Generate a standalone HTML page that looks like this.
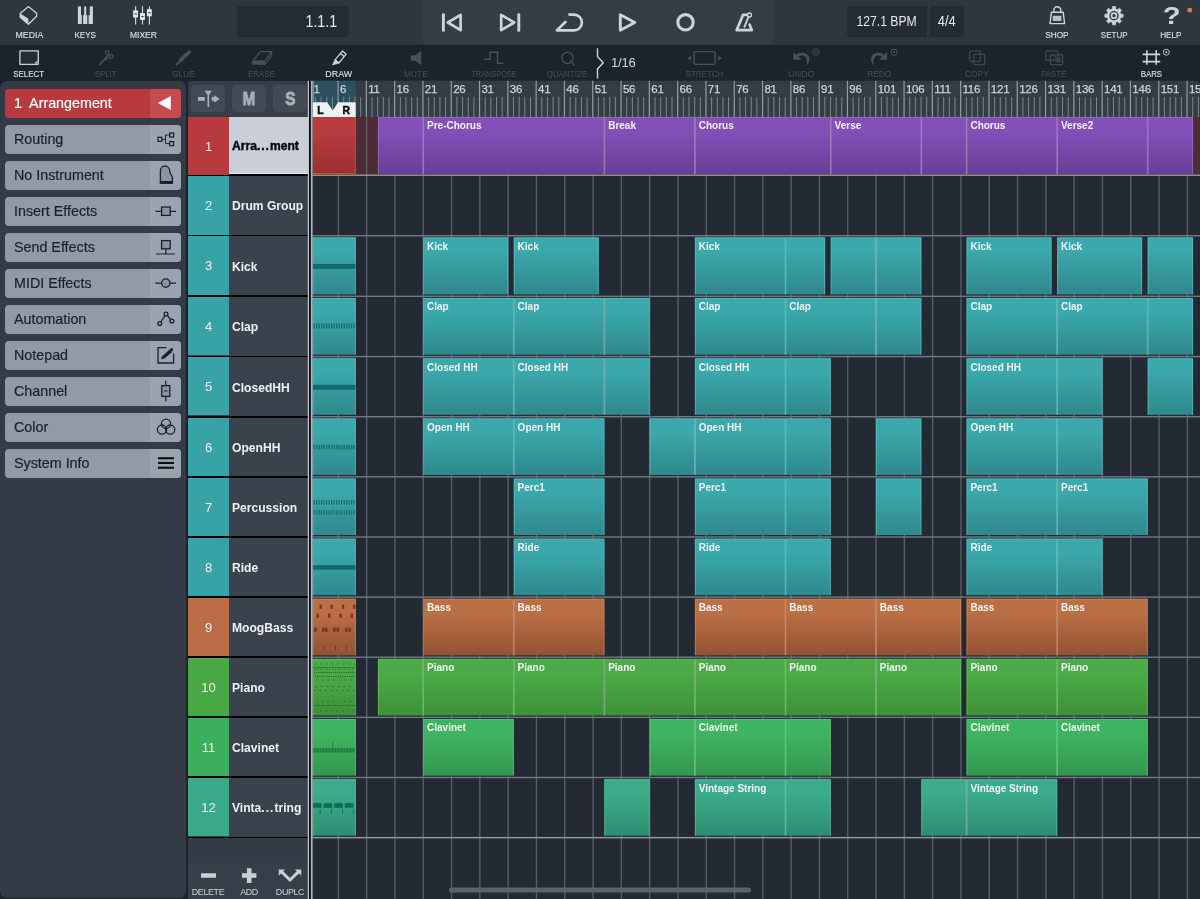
<!DOCTYPE html>
<html lang="en"><head><meta charset="utf-8"><title>Arrangement</title>
<style>

html,body{margin:0;padding:0;background:#1d232c;}
body{width:1200px;height:899px;overflow:hidden;position:relative;font-family:"Liberation Sans", sans-serif;}
.abs{position:absolute}
.tlab,.blab,.pbtn span,.trow b,.trow span,.hb span,.box,.q16{will-change:transform}
#tl text,#icons text{will-change:transform}
#top{left:0;top:0;width:1200px;height:44.5px;background:#2e3640}
#trans{left:422.5px;top:0;width:350.5px;height:44.5px;background:#343c46}
#tool{left:0;top:44.5px;width:1200px;height:36.5px;background:#1d232c}
.box{background:#252b34;border-radius:3px;color:#e4e8ec;text-align:center}
.tlab{position:absolute;font-size:9.1px;color:#dde1e5;text-align:center;width:60px;margin-left:-30px;white-space:nowrap;letter-spacing:0;-webkit-text-stroke:0.1px currentColor}
.tlab.off{color:#454c56}
#panel{left:0;top:80.5px;width:185.6px;height:817.8px;background:#343b46;border-radius:7px}
.pbtn{position:absolute;left:5px;width:176px;height:28.5px;border-radius:4px;background:#909ba5;overflow:hidden;color:#1b212a;font-size:14.3px;line-height:28.5px}
.pbtn span{position:absolute;left:8.6px;top:0;white-space:nowrap;-webkit-text-stroke:0.2px currentColor}
.pbtn i{position:absolute;left:145px;top:0;width:31px;height:28.5px;background:#9aa4ae}
.pbtn.sel{background:#b83a40;color:#fff}
.pbtn.sel i{background:#c64a4e}
#tlist{left:187.8px;top:80.8px;width:120px;height:819px;background:linear-gradient(#000,#000) 0 35px/120px 724px no-repeat}
#thdr{left:0;top:0;width:120px;height:35.8px;background:#363e49;border-radius:4px 0 0 0}
.hb{position:absolute;top:4.6px;width:33.8px;height:26.8px;border-radius:4.5px;background:#424a55;color:#a9b0b8;font-weight:bold;font-size:19px;line-height:27.4px;text-align:center}
.hb span{display:inline-block;transform:scaleX(0.8);-webkit-text-stroke:0.9px #a9b0b8}
.trow{position:absolute;left:0;width:120px;height:58.4px;background:#3a424d}
.trow b{position:absolute;left:0;top:0;padding-top:1.2px;box-sizing:border-box;width:41px;height:100%;font-weight:normal;color:#eef2f4;font-size:13px;text-align:center;line-height:inherit}
.trow span{position:absolute;left:44.2px;top:1.2px;line-height:inherit;font-size:12.1px;font-weight:bold;color:#eef1f4;white-space:nowrap}
.trow u{text-decoration:none;letter-spacing:1px}
.trow.sel{background:#c9ced8;box-shadow:inset 0 -1px 0 #e6e9ee}
.trow.sel span{color:#07080b;-webkit-text-stroke:0.45px #07080b}
#tbot1{left:0;top:757.5px;width:120px;height:24.7px;background:#333b46}
#tbot2{left:0;top:782.2px;width:120px;height:37px;background:#363e49}
.blab{position:absolute;top:806.6px;font-size:8.9px;color:#d0d5da;width:50px;margin-left:-25px;text-align:center;letter-spacing:-0.35px}

</style></head><body>
<div id="top" class="abs"></div><div id="trans" class="abs"></div><div id="tool" class="abs"></div>
<div class="abs box" style="left:237px;top:6px;width:112px;height:31px;"><div class="abs" style="right:11.6px;top:0.4px;line-height:31px;font-size:15.8px;transform:scaleX(0.9);transform-origin:100% 50%">1.1.1</div></div>
<div class="abs box" style="left:847px;top:6px;width:80px;height:31px;line-height:31.6px;font-size:14px;border-radius:3px 0 0 3px"><span style="display:inline-block;transform:scaleX(0.87)">127.1 BPM</span></div>
<div class="abs box" style="left:929.5px;top:6px;width:34px;height:31px;line-height:31.6px;font-size:14px;border-radius:0 3px 3px 0"><span style="display:inline-block;transform:scaleX(0.92)">4/4</span></div>
<div class="tlab" style="left:28.5px;top:29.6px"><span style="display:inline-block;transform:scaleX(0.968)">MEDIA</span></div>
<div class="tlab" style="left:85.3px;top:29.6px"><span style="display:inline-block;transform:scaleX(0.882)">KEYS</span></div>
<div class="tlab" style="left:142.5px;top:29.6px"><span style="display:inline-block;transform:scaleX(0.934)">MIXER</span></div>
<div class="tlab" style="left:1056.8px;top:29.6px"><span style="display:inline-block;transform:scaleX(0.908)">SHOP</span></div>
<div class="tlab" style="left:1113.8px;top:29.6px"><span style="display:inline-block;transform:scaleX(0.877)">SETUP</span></div>
<div class="tlab" style="left:1171px;top:29.6px"><span style="display:inline-block;transform:scaleX(0.900)">HELP</span></div>
<div class="tlab" style="left:28.5px;top:68.9px"><span style="display:inline-block;transform:scaleX(0.876)">SELECT</span></div>
<div class="tlab off" style="left:106px;top:68.9px"><span style="display:inline-block;transform:scaleX(0.862)">SPLIT</span></div>
<div class="tlab off" style="left:183.3px;top:68.9px"><span style="display:inline-block;transform:scaleX(0.916)">GLUE</span></div>
<div class="tlab off" style="left:261.2px;top:68.9px"><span style="display:inline-block;transform:scaleX(0.875)">ERASE</span></div>
<div class="tlab" style="left:339px;top:68.9px"><span style="display:inline-block;transform:scaleX(0.974)">DRAW</span></div>
<div class="tlab off" style="left:416.2px;top:68.9px"><span style="display:inline-block;transform:scaleX(0.920)">MUTE</span></div>
<div class="tlab off" style="left:493.6px;top:68.9px"><span style="display:inline-block;transform:scaleX(0.809)">TRANSPOSE</span></div>
<div class="tlab off" style="left:566.8px;top:68.9px"><span style="display:inline-block;transform:scaleX(0.876)">QUANTIZE</span></div>
<div class="tlab off" style="left:704.3px;top:68.9px"><span style="display:inline-block;transform:scaleX(0.880)">STRETCH</span></div>
<div class="tlab off" style="left:801px;top:68.9px"><span style="display:inline-block;transform:scaleX(0.978)">UNDO</span></div>
<div class="tlab off" style="left:879px;top:68.9px"><span style="display:inline-block;transform:scaleX(0.913)">REDO</span></div>
<div class="tlab off" style="left:976.8px;top:68.9px"><span style="display:inline-block;transform:scaleX(0.919)">COPY</span></div>
<div class="tlab off" style="left:1054px;top:68.9px"><span style="display:inline-block;transform:scaleX(0.868)">PASTE</span></div>
<div class="tlab" style="left:1151.2px;top:68.9px"><span style="display:inline-block;transform:scaleX(0.868)">BARS</span></div>
<div class="abs q16" style="left:611.4px;top:55.2px;font-size:13px;color:#d5dade;letter-spacing:-0.2px">1/16</div>
<div id="panel" class="abs">
<div class="pbtn sel" style="top:8.5px"><i></i><span>1&nbsp; Arrangement</span></div>
<div class="pbtn" style="top:44.5px"><i></i><span>Routing</span></div>
<div class="pbtn" style="top:80.5px"><i></i><span>No Instrument</span></div>
<div class="pbtn" style="top:116.5px"><i></i><span>Insert Effects</span></div>
<div class="pbtn" style="top:152.5px"><i></i><span>Send Effects</span></div>
<div class="pbtn" style="top:188.5px"><i></i><span>MIDI Effects</span></div>
<div class="pbtn" style="top:224.5px"><i></i><span>Automation</span></div>
<div class="pbtn" style="top:260.5px"><i></i><span>Notepad</span></div>
<div class="pbtn" style="top:296.5px"><i></i><span>Channel</span></div>
<div class="pbtn" style="top:332.5px"><i></i><span>Color</span></div>
<div class="pbtn" style="top:368.5px"><i></i><span>System Info</span></div>
</div>
<div id="tlist" class="abs">
<div id="thdr" class="abs"><div class="hb" style="left:3.6px"></div><div class="hb" style="left:44.4px"><span>M</span></div><div class="hb" style="left:85.2px"><span>S</span></div></div>
<div class="trow sel" style="top:35.80px;height:57.60px;line-height:57.60px"><b style="background:#b73a3f">1</b><span>Arra<u>...</u>ment</span></div>
<div class="trow" style="top:95.20px;height:58.70px;line-height:58.70px"><b style="background:#38a3a6">2</b><span>Drum Group</span></div>
<div class="trow" style="top:155.70px;height:58.80px;line-height:58.80px"><b style="background:#38a3a6">3</b><span>Kick</span></div>
<div class="trow" style="top:216.30px;height:58.48px;line-height:58.48px"><b style="background:#38a3a6">4</b><span>Clap</span></div>
<div class="trow" style="top:276.58px;height:58.33px;line-height:58.33px"><b style="background:#38a3a6">5</b><span>ClosedHH</span></div>
<div class="trow" style="top:336.71px;height:58.33px;line-height:58.33px"><b style="background:#38a3a6">6</b><span>OpenHH</span></div>
<div class="trow" style="top:396.84px;height:58.33px;line-height:58.33px"><b style="background:#38a3a6">7</b><span>Percussion</span></div>
<div class="trow" style="top:456.97px;height:58.33px;line-height:58.33px"><b style="background:#38a3a6">8</b><span>Ride</span></div>
<div class="trow" style="top:517.10px;height:58.33px;line-height:58.33px"><b style="background:#b96c45">9</b><span>MoogBass</span></div>
<div class="trow" style="top:577.23px;height:58.33px;line-height:58.33px"><b style="background:#48a844">10</b><span>Piano</span></div>
<div class="trow" style="top:637.36px;height:58.33px;line-height:58.33px"><b style="background:#3caf5c">11</b><span>Clavinet</span></div>
<div class="trow" style="top:697.49px;height:58.33px;line-height:58.33px"><b style="background:#3aa988">12</b><span>Vinta<u>...</u>tring</span></div>
<div id="tbot1" class="abs"></div><div id="tbot2" class="abs"></div>
<div class="blab" style="left:20.6px">DELETE</div>
<div class="blab" style="left:61.4px">ADD</div>
<div class="blab" style="left:102.2px">DUPLC</div>
</div>
<svg id="tl" width="1200" height="899" viewBox="0 0 1200 899" style="position:absolute;left:0;top:0">
<defs>
<linearGradient id="g_teal" x1="0" y1="0" x2="0" y2="1"><stop offset="0" stop-color="#3ba8ab"/><stop offset="0.25" stop-color="#3ba8ab"/><stop offset="1" stop-color="#2f888c"/></linearGradient>
<linearGradient id="g_purple" x1="0" y1="0" x2="0" y2="1"><stop offset="0" stop-color="#8350b8"/><stop offset="0.25" stop-color="#8350b8"/><stop offset="1" stop-color="#693e96"/></linearGradient>
<linearGradient id="g_orange" x1="0" y1="0" x2="0" y2="1"><stop offset="0" stop-color="#bb6f45"/><stop offset="0.25" stop-color="#bb6f45"/><stop offset="1" stop-color="#925233"/></linearGradient>
<linearGradient id="g_green" x1="0" y1="0" x2="0" y2="1"><stop offset="0" stop-color="#4bab47"/><stop offset="0.25" stop-color="#4bab47"/><stop offset="1" stop-color="#3e9138"/></linearGradient>
<linearGradient id="g_clav" x1="0" y1="0" x2="0" y2="1"><stop offset="0" stop-color="#3eb460"/><stop offset="0.25" stop-color="#3eb460"/><stop offset="1" stop-color="#34974f"/></linearGradient>
<linearGradient id="g_vint" x1="0" y1="0" x2="0" y2="1"><stop offset="0" stop-color="#3bac8a"/><stop offset="0.25" stop-color="#3bac8a"/><stop offset="1" stop-color="#2e8d70"/></linearGradient>
<linearGradient id="g_red" x1="0" y1="0" x2="0" y2="1"><stop offset="0" stop-color="#b93b40"/><stop offset="0.25" stop-color="#b93b40"/><stop offset="1" stop-color="#98302f"/></linearGradient>
<clipPath id="cp_tl"><rect x="312.6" y="80" width="900" height="830"/></clipPath>
</defs>
<rect x="308" y="117" width="892" height="782" fill="#232a34"/>
<path d="M312.6 80.8 H1193 Q1200 80.8 1200 88 V117 H312.6 Z" fill="#343c46"/>
<rect x="312.6" y="80.8" width="43" height="36.2" fill="#2b5160"/>
<g clip-path="url(#cp_tl)">
<rect x="314.91" y="96.8" width="1" height="20.2" fill="#7e858d"/>
<rect x="320.57" y="96.8" width="1" height="20.2" fill="#7e858d"/>
<rect x="326.23" y="96.8" width="1" height="20.2" fill="#7e858d"/>
<rect x="331.89" y="96.8" width="1" height="20.2" fill="#7e858d"/>
<rect x="337.45" y="80.8" width="1.2" height="36.2" fill="#959ba2"/>
<rect x="343.21" y="96.8" width="1" height="20.2" fill="#7e858d"/>
<rect x="348.87" y="96.8" width="1" height="20.2" fill="#7e858d"/>
<rect x="354.53" y="96.8" width="1" height="20.2" fill="#7e858d"/>
<rect x="360.19" y="96.8" width="1" height="20.2" fill="#7e858d"/>
<rect x="365.75" y="80.8" width="1.2" height="36.2" fill="#959ba2"/>
<rect x="371.51" y="96.8" width="1" height="20.2" fill="#7e858d"/>
<rect x="377.17" y="96.8" width="1" height="20.2" fill="#7e858d"/>
<rect x="382.83" y="96.8" width="1" height="20.2" fill="#7e858d"/>
<rect x="388.49" y="96.8" width="1" height="20.2" fill="#7e858d"/>
<rect x="394.05" y="80.8" width="1.2" height="36.2" fill="#959ba2"/>
<rect x="399.81" y="96.8" width="1" height="20.2" fill="#7e858d"/>
<rect x="405.47" y="96.8" width="1" height="20.2" fill="#7e858d"/>
<rect x="411.13" y="96.8" width="1" height="20.2" fill="#7e858d"/>
<rect x="416.79" y="96.8" width="1" height="20.2" fill="#7e858d"/>
<rect x="422.35" y="80.8" width="1.2" height="36.2" fill="#959ba2"/>
<rect x="428.11" y="96.8" width="1" height="20.2" fill="#7e858d"/>
<rect x="433.77" y="96.8" width="1" height="20.2" fill="#7e858d"/>
<rect x="439.43" y="96.8" width="1" height="20.2" fill="#7e858d"/>
<rect x="445.09" y="96.8" width="1" height="20.2" fill="#7e858d"/>
<rect x="450.65" y="80.8" width="1.2" height="36.2" fill="#959ba2"/>
<rect x="456.41" y="96.8" width="1" height="20.2" fill="#7e858d"/>
<rect x="462.07" y="96.8" width="1" height="20.2" fill="#7e858d"/>
<rect x="467.73" y="96.8" width="1" height="20.2" fill="#7e858d"/>
<rect x="473.39" y="96.8" width="1" height="20.2" fill="#7e858d"/>
<rect x="478.95" y="80.8" width="1.2" height="36.2" fill="#959ba2"/>
<rect x="484.71" y="96.8" width="1" height="20.2" fill="#7e858d"/>
<rect x="490.37" y="96.8" width="1" height="20.2" fill="#7e858d"/>
<rect x="496.03" y="96.8" width="1" height="20.2" fill="#7e858d"/>
<rect x="501.69" y="96.8" width="1" height="20.2" fill="#7e858d"/>
<rect x="507.25" y="80.8" width="1.2" height="36.2" fill="#959ba2"/>
<rect x="513.01" y="96.8" width="1" height="20.2" fill="#7e858d"/>
<rect x="518.67" y="96.8" width="1" height="20.2" fill="#7e858d"/>
<rect x="524.33" y="96.8" width="1" height="20.2" fill="#7e858d"/>
<rect x="529.99" y="96.8" width="1" height="20.2" fill="#7e858d"/>
<rect x="535.55" y="80.8" width="1.2" height="36.2" fill="#959ba2"/>
<rect x="541.31" y="96.8" width="1" height="20.2" fill="#7e858d"/>
<rect x="546.97" y="96.8" width="1" height="20.2" fill="#7e858d"/>
<rect x="552.63" y="96.8" width="1" height="20.2" fill="#7e858d"/>
<rect x="558.29" y="96.8" width="1" height="20.2" fill="#7e858d"/>
<rect x="563.85" y="80.8" width="1.2" height="36.2" fill="#959ba2"/>
<rect x="569.61" y="96.8" width="1" height="20.2" fill="#7e858d"/>
<rect x="575.27" y="96.8" width="1" height="20.2" fill="#7e858d"/>
<rect x="580.93" y="96.8" width="1" height="20.2" fill="#7e858d"/>
<rect x="586.59" y="96.8" width="1" height="20.2" fill="#7e858d"/>
<rect x="592.15" y="80.8" width="1.2" height="36.2" fill="#959ba2"/>
<rect x="597.91" y="96.8" width="1" height="20.2" fill="#7e858d"/>
<rect x="603.57" y="96.8" width="1" height="20.2" fill="#7e858d"/>
<rect x="609.23" y="96.8" width="1" height="20.2" fill="#7e858d"/>
<rect x="614.89" y="96.8" width="1" height="20.2" fill="#7e858d"/>
<rect x="620.45" y="80.8" width="1.2" height="36.2" fill="#959ba2"/>
<rect x="626.21" y="96.8" width="1" height="20.2" fill="#7e858d"/>
<rect x="631.87" y="96.8" width="1" height="20.2" fill="#7e858d"/>
<rect x="637.53" y="96.8" width="1" height="20.2" fill="#7e858d"/>
<rect x="643.19" y="96.8" width="1" height="20.2" fill="#7e858d"/>
<rect x="648.75" y="80.8" width="1.2" height="36.2" fill="#959ba2"/>
<rect x="654.51" y="96.8" width="1" height="20.2" fill="#7e858d"/>
<rect x="660.17" y="96.8" width="1" height="20.2" fill="#7e858d"/>
<rect x="665.83" y="96.8" width="1" height="20.2" fill="#7e858d"/>
<rect x="671.49" y="96.8" width="1" height="20.2" fill="#7e858d"/>
<rect x="677.05" y="80.8" width="1.2" height="36.2" fill="#959ba2"/>
<rect x="682.81" y="96.8" width="1" height="20.2" fill="#7e858d"/>
<rect x="688.47" y="96.8" width="1" height="20.2" fill="#7e858d"/>
<rect x="694.13" y="96.8" width="1" height="20.2" fill="#7e858d"/>
<rect x="699.79" y="96.8" width="1" height="20.2" fill="#7e858d"/>
<rect x="705.35" y="80.8" width="1.2" height="36.2" fill="#959ba2"/>
<rect x="711.11" y="96.8" width="1" height="20.2" fill="#7e858d"/>
<rect x="716.77" y="96.8" width="1" height="20.2" fill="#7e858d"/>
<rect x="722.43" y="96.8" width="1" height="20.2" fill="#7e858d"/>
<rect x="728.09" y="96.8" width="1" height="20.2" fill="#7e858d"/>
<rect x="733.65" y="80.8" width="1.2" height="36.2" fill="#959ba2"/>
<rect x="739.41" y="96.8" width="1" height="20.2" fill="#7e858d"/>
<rect x="745.07" y="96.8" width="1" height="20.2" fill="#7e858d"/>
<rect x="750.73" y="96.8" width="1" height="20.2" fill="#7e858d"/>
<rect x="756.39" y="96.8" width="1" height="20.2" fill="#7e858d"/>
<rect x="761.95" y="80.8" width="1.2" height="36.2" fill="#959ba2"/>
<rect x="767.71" y="96.8" width="1" height="20.2" fill="#7e858d"/>
<rect x="773.37" y="96.8" width="1" height="20.2" fill="#7e858d"/>
<rect x="779.03" y="96.8" width="1" height="20.2" fill="#7e858d"/>
<rect x="784.69" y="96.8" width="1" height="20.2" fill="#7e858d"/>
<rect x="790.25" y="80.8" width="1.2" height="36.2" fill="#959ba2"/>
<rect x="796.01" y="96.8" width="1" height="20.2" fill="#7e858d"/>
<rect x="801.67" y="96.8" width="1" height="20.2" fill="#7e858d"/>
<rect x="807.33" y="96.8" width="1" height="20.2" fill="#7e858d"/>
<rect x="812.99" y="96.8" width="1" height="20.2" fill="#7e858d"/>
<rect x="818.55" y="80.8" width="1.2" height="36.2" fill="#959ba2"/>
<rect x="824.31" y="96.8" width="1" height="20.2" fill="#7e858d"/>
<rect x="829.97" y="96.8" width="1" height="20.2" fill="#7e858d"/>
<rect x="835.63" y="96.8" width="1" height="20.2" fill="#7e858d"/>
<rect x="841.29" y="96.8" width="1" height="20.2" fill="#7e858d"/>
<rect x="846.85" y="80.8" width="1.2" height="36.2" fill="#959ba2"/>
<rect x="852.61" y="96.8" width="1" height="20.2" fill="#7e858d"/>
<rect x="858.27" y="96.8" width="1" height="20.2" fill="#7e858d"/>
<rect x="863.93" y="96.8" width="1" height="20.2" fill="#7e858d"/>
<rect x="869.59" y="96.8" width="1" height="20.2" fill="#7e858d"/>
<rect x="875.15" y="80.8" width="1.2" height="36.2" fill="#959ba2"/>
<rect x="880.91" y="96.8" width="1" height="20.2" fill="#7e858d"/>
<rect x="886.57" y="96.8" width="1" height="20.2" fill="#7e858d"/>
<rect x="892.23" y="96.8" width="1" height="20.2" fill="#7e858d"/>
<rect x="897.89" y="96.8" width="1" height="20.2" fill="#7e858d"/>
<rect x="903.45" y="80.8" width="1.2" height="36.2" fill="#959ba2"/>
<rect x="909.21" y="96.8" width="1" height="20.2" fill="#7e858d"/>
<rect x="914.87" y="96.8" width="1" height="20.2" fill="#7e858d"/>
<rect x="920.53" y="96.8" width="1" height="20.2" fill="#7e858d"/>
<rect x="926.19" y="96.8" width="1" height="20.2" fill="#7e858d"/>
<rect x="931.75" y="80.8" width="1.2" height="36.2" fill="#959ba2"/>
<rect x="937.51" y="96.8" width="1" height="20.2" fill="#7e858d"/>
<rect x="943.17" y="96.8" width="1" height="20.2" fill="#7e858d"/>
<rect x="948.83" y="96.8" width="1" height="20.2" fill="#7e858d"/>
<rect x="954.49" y="96.8" width="1" height="20.2" fill="#7e858d"/>
<rect x="960.05" y="80.8" width="1.2" height="36.2" fill="#959ba2"/>
<rect x="965.81" y="96.8" width="1" height="20.2" fill="#7e858d"/>
<rect x="971.47" y="96.8" width="1" height="20.2" fill="#7e858d"/>
<rect x="977.13" y="96.8" width="1" height="20.2" fill="#7e858d"/>
<rect x="982.79" y="96.8" width="1" height="20.2" fill="#7e858d"/>
<rect x="988.35" y="80.8" width="1.2" height="36.2" fill="#959ba2"/>
<rect x="994.11" y="96.8" width="1" height="20.2" fill="#7e858d"/>
<rect x="999.77" y="96.8" width="1" height="20.2" fill="#7e858d"/>
<rect x="1005.43" y="96.8" width="1" height="20.2" fill="#7e858d"/>
<rect x="1011.09" y="96.8" width="1" height="20.2" fill="#7e858d"/>
<rect x="1016.65" y="80.8" width="1.2" height="36.2" fill="#959ba2"/>
<rect x="1022.41" y="96.8" width="1" height="20.2" fill="#7e858d"/>
<rect x="1028.07" y="96.8" width="1" height="20.2" fill="#7e858d"/>
<rect x="1033.73" y="96.8" width="1" height="20.2" fill="#7e858d"/>
<rect x="1039.39" y="96.8" width="1" height="20.2" fill="#7e858d"/>
<rect x="1044.95" y="80.8" width="1.2" height="36.2" fill="#959ba2"/>
<rect x="1050.71" y="96.8" width="1" height="20.2" fill="#7e858d"/>
<rect x="1056.37" y="96.8" width="1" height="20.2" fill="#7e858d"/>
<rect x="1062.03" y="96.8" width="1" height="20.2" fill="#7e858d"/>
<rect x="1067.69" y="96.8" width="1" height="20.2" fill="#7e858d"/>
<rect x="1073.25" y="80.8" width="1.2" height="36.2" fill="#959ba2"/>
<rect x="1079.01" y="96.8" width="1" height="20.2" fill="#7e858d"/>
<rect x="1084.67" y="96.8" width="1" height="20.2" fill="#7e858d"/>
<rect x="1090.33" y="96.8" width="1" height="20.2" fill="#7e858d"/>
<rect x="1095.99" y="96.8" width="1" height="20.2" fill="#7e858d"/>
<rect x="1101.55" y="80.8" width="1.2" height="36.2" fill="#959ba2"/>
<rect x="1107.31" y="96.8" width="1" height="20.2" fill="#7e858d"/>
<rect x="1112.97" y="96.8" width="1" height="20.2" fill="#7e858d"/>
<rect x="1118.63" y="96.8" width="1" height="20.2" fill="#7e858d"/>
<rect x="1124.29" y="96.8" width="1" height="20.2" fill="#7e858d"/>
<rect x="1129.85" y="80.8" width="1.2" height="36.2" fill="#959ba2"/>
<rect x="1135.61" y="96.8" width="1" height="20.2" fill="#7e858d"/>
<rect x="1141.27" y="96.8" width="1" height="20.2" fill="#7e858d"/>
<rect x="1146.93" y="96.8" width="1" height="20.2" fill="#7e858d"/>
<rect x="1152.59" y="96.8" width="1" height="20.2" fill="#7e858d"/>
<rect x="1158.15" y="80.8" width="1.2" height="36.2" fill="#959ba2"/>
<rect x="1163.91" y="96.8" width="1" height="20.2" fill="#7e858d"/>
<rect x="1169.57" y="96.8" width="1" height="20.2" fill="#7e858d"/>
<rect x="1175.23" y="96.8" width="1" height="20.2" fill="#7e858d"/>
<rect x="1180.89" y="96.8" width="1" height="20.2" fill="#7e858d"/>
<rect x="1186.45" y="80.8" width="1.2" height="36.2" fill="#959ba2"/>
<rect x="1192.21" y="96.8" width="1" height="20.2" fill="#7e858d"/>
<rect x="1197.87" y="96.8" width="1" height="20.2" fill="#7e858d"/>
<rect x="1203.53" y="96.8" width="1" height="20.2" fill="#7e858d"/>
<rect x="312.6" y="80.8" width="1.2" height="21" fill="#8fa0a8"/>
</g>
<text x="313.40" y="93.1" font-family='"Liberation Sans", sans-serif' font-size="11.5" fill="#ced3d8" stroke="#ced3d8" stroke-width="0.25" letter-spacing="-0.25">1</text>
<text x="339.95" y="93.1" font-family='"Liberation Sans", sans-serif' font-size="11.5" fill="#ced3d8" stroke="#ced3d8" stroke-width="0.25" letter-spacing="-0.25">6</text>
<text x="368.25" y="93.1" font-family='"Liberation Sans", sans-serif' font-size="11.5" fill="#ced3d8" stroke="#ced3d8" stroke-width="0.25" letter-spacing="-0.25">11</text>
<text x="396.55" y="93.1" font-family='"Liberation Sans", sans-serif' font-size="11.5" fill="#ced3d8" stroke="#ced3d8" stroke-width="0.25" letter-spacing="-0.25">16</text>
<text x="424.85" y="93.1" font-family='"Liberation Sans", sans-serif' font-size="11.5" fill="#ced3d8" stroke="#ced3d8" stroke-width="0.25" letter-spacing="-0.25">21</text>
<text x="453.15" y="93.1" font-family='"Liberation Sans", sans-serif' font-size="11.5" fill="#ced3d8" stroke="#ced3d8" stroke-width="0.25" letter-spacing="-0.25">26</text>
<text x="481.45" y="93.1" font-family='"Liberation Sans", sans-serif' font-size="11.5" fill="#ced3d8" stroke="#ced3d8" stroke-width="0.25" letter-spacing="-0.25">31</text>
<text x="509.75" y="93.1" font-family='"Liberation Sans", sans-serif' font-size="11.5" fill="#ced3d8" stroke="#ced3d8" stroke-width="0.25" letter-spacing="-0.25">36</text>
<text x="538.05" y="93.1" font-family='"Liberation Sans", sans-serif' font-size="11.5" fill="#ced3d8" stroke="#ced3d8" stroke-width="0.25" letter-spacing="-0.25">41</text>
<text x="566.35" y="93.1" font-family='"Liberation Sans", sans-serif' font-size="11.5" fill="#ced3d8" stroke="#ced3d8" stroke-width="0.25" letter-spacing="-0.25">46</text>
<text x="594.65" y="93.1" font-family='"Liberation Sans", sans-serif' font-size="11.5" fill="#ced3d8" stroke="#ced3d8" stroke-width="0.25" letter-spacing="-0.25">51</text>
<text x="622.95" y="93.1" font-family='"Liberation Sans", sans-serif' font-size="11.5" fill="#ced3d8" stroke="#ced3d8" stroke-width="0.25" letter-spacing="-0.25">56</text>
<text x="651.25" y="93.1" font-family='"Liberation Sans", sans-serif' font-size="11.5" fill="#ced3d8" stroke="#ced3d8" stroke-width="0.25" letter-spacing="-0.25">61</text>
<text x="679.55" y="93.1" font-family='"Liberation Sans", sans-serif' font-size="11.5" fill="#ced3d8" stroke="#ced3d8" stroke-width="0.25" letter-spacing="-0.25">66</text>
<text x="707.85" y="93.1" font-family='"Liberation Sans", sans-serif' font-size="11.5" fill="#ced3d8" stroke="#ced3d8" stroke-width="0.25" letter-spacing="-0.25">71</text>
<text x="736.15" y="93.1" font-family='"Liberation Sans", sans-serif' font-size="11.5" fill="#ced3d8" stroke="#ced3d8" stroke-width="0.25" letter-spacing="-0.25">76</text>
<text x="764.45" y="93.1" font-family='"Liberation Sans", sans-serif' font-size="11.5" fill="#ced3d8" stroke="#ced3d8" stroke-width="0.25" letter-spacing="-0.25">81</text>
<text x="792.75" y="93.1" font-family='"Liberation Sans", sans-serif' font-size="11.5" fill="#ced3d8" stroke="#ced3d8" stroke-width="0.25" letter-spacing="-0.25">86</text>
<text x="821.05" y="93.1" font-family='"Liberation Sans", sans-serif' font-size="11.5" fill="#ced3d8" stroke="#ced3d8" stroke-width="0.25" letter-spacing="-0.25">91</text>
<text x="849.35" y="93.1" font-family='"Liberation Sans", sans-serif' font-size="11.5" fill="#ced3d8" stroke="#ced3d8" stroke-width="0.25" letter-spacing="-0.25">96</text>
<text x="877.65" y="93.1" font-family='"Liberation Sans", sans-serif' font-size="11.5" fill="#ced3d8" stroke="#ced3d8" stroke-width="0.25" letter-spacing="-0.25">101</text>
<text x="905.95" y="93.1" font-family='"Liberation Sans", sans-serif' font-size="11.5" fill="#ced3d8" stroke="#ced3d8" stroke-width="0.25" letter-spacing="-0.25">106</text>
<text x="934.25" y="93.1" font-family='"Liberation Sans", sans-serif' font-size="11.5" fill="#ced3d8" stroke="#ced3d8" stroke-width="0.25" letter-spacing="-0.25">111</text>
<text x="962.55" y="93.1" font-family='"Liberation Sans", sans-serif' font-size="11.5" fill="#ced3d8" stroke="#ced3d8" stroke-width="0.25" letter-spacing="-0.25">116</text>
<text x="990.85" y="93.1" font-family='"Liberation Sans", sans-serif' font-size="11.5" fill="#ced3d8" stroke="#ced3d8" stroke-width="0.25" letter-spacing="-0.25">121</text>
<text x="1019.15" y="93.1" font-family='"Liberation Sans", sans-serif' font-size="11.5" fill="#ced3d8" stroke="#ced3d8" stroke-width="0.25" letter-spacing="-0.25">126</text>
<text x="1047.45" y="93.1" font-family='"Liberation Sans", sans-serif' font-size="11.5" fill="#ced3d8" stroke="#ced3d8" stroke-width="0.25" letter-spacing="-0.25">131</text>
<text x="1075.75" y="93.1" font-family='"Liberation Sans", sans-serif' font-size="11.5" fill="#ced3d8" stroke="#ced3d8" stroke-width="0.25" letter-spacing="-0.25">136</text>
<text x="1104.05" y="93.1" font-family='"Liberation Sans", sans-serif' font-size="11.5" fill="#ced3d8" stroke="#ced3d8" stroke-width="0.25" letter-spacing="-0.25">141</text>
<text x="1132.35" y="93.1" font-family='"Liberation Sans", sans-serif' font-size="11.5" fill="#ced3d8" stroke="#ced3d8" stroke-width="0.25" letter-spacing="-0.25">146</text>
<text x="1160.65" y="93.1" font-family='"Liberation Sans", sans-serif' font-size="11.5" fill="#ced3d8" stroke="#ced3d8" stroke-width="0.25" letter-spacing="-0.25">151</text>
<text x="1188.95" y="93.1" font-family='"Liberation Sans", sans-serif' font-size="11.5" fill="#ced3d8" stroke="#ced3d8" stroke-width="0.25" letter-spacing="-0.25">156</text>
<path d="M313.2 102.2 H327.2 L332.7 110.6 L338.2 102.2 H355 L355.7 103 V117 H312.6 V103 Z" fill="#eef1f2"/>
<text x="317.2" y="113.6" font-family='"Liberation Sans", sans-serif' font-size="10.4" font-weight="bold" fill="#0a0a0a" stroke="#0a0a0a" stroke-width="0.45">L</text>
<text x="342.6" y="113.6" font-family='"Liberation Sans", sans-serif' font-size="10.4" font-weight="bold" fill="#0a0a0a" stroke="#0a0a0a" stroke-width="0.45">R</text>
<rect x="355.6" y="117" width="22.4" height="57.2" fill="#4d2c33"/>
<rect x="1193" y="117" width="7" height="57.2" fill="#4d2c33"/>
<g>
<rect x="337.65" y="117" width="1.4" height="782" fill="#555d69"/>
<rect x="365.95" y="117" width="1.4" height="782" fill="#555d69"/>
<rect x="394.25" y="117" width="1.4" height="782" fill="#555d69"/>
<rect x="422.55" y="117" width="1.4" height="782" fill="#555d69"/>
<rect x="450.85" y="117" width="1.4" height="782" fill="#555d69"/>
<rect x="479.15" y="117" width="1.4" height="782" fill="#555d69"/>
<rect x="507.45" y="117" width="1.4" height="782" fill="#555d69"/>
<rect x="535.75" y="117" width="1.4" height="782" fill="#555d69"/>
<rect x="564.05" y="117" width="1.4" height="782" fill="#555d69"/>
<rect x="592.35" y="117" width="1.4" height="782" fill="#555d69"/>
<rect x="620.65" y="117" width="1.4" height="782" fill="#555d69"/>
<rect x="648.95" y="117" width="1.4" height="782" fill="#555d69"/>
<rect x="677.25" y="117" width="1.4" height="782" fill="#555d69"/>
<rect x="705.55" y="117" width="1.4" height="782" fill="#555d69"/>
<rect x="733.85" y="117" width="1.4" height="782" fill="#555d69"/>
<rect x="762.15" y="117" width="1.4" height="782" fill="#555d69"/>
<rect x="790.45" y="117" width="1.4" height="782" fill="#555d69"/>
<rect x="818.75" y="117" width="1.4" height="782" fill="#555d69"/>
<rect x="847.05" y="117" width="1.4" height="782" fill="#555d69"/>
<rect x="875.35" y="117" width="1.4" height="782" fill="#555d69"/>
<rect x="903.65" y="117" width="1.4" height="782" fill="#555d69"/>
<rect x="931.95" y="117" width="1.4" height="782" fill="#555d69"/>
<rect x="960.25" y="117" width="1.4" height="782" fill="#555d69"/>
<rect x="988.55" y="117" width="1.4" height="782" fill="#555d69"/>
<rect x="1016.85" y="117" width="1.4" height="782" fill="#555d69"/>
<rect x="1045.15" y="117" width="1.4" height="782" fill="#555d69"/>
<rect x="1073.45" y="117" width="1.4" height="782" fill="#555d69"/>
<rect x="1101.75" y="117" width="1.4" height="782" fill="#555d69"/>
<rect x="1130.05" y="117" width="1.4" height="782" fill="#555d69"/>
<rect x="1158.35" y="117" width="1.4" height="782" fill="#555d69"/>
<rect x="1186.65" y="117" width="1.4" height="782" fill="#555d69"/>
</g>
<rect x="312.6" y="174.50" width="888" height="1.4" fill="#a8948f"/>
<rect x="312.6" y="235.00" width="888" height="1.4" fill="#727983"/>
<rect x="312.6" y="295.60" width="888" height="1.4" fill="#727983"/>
<rect x="312.6" y="355.88" width="888" height="1.4" fill="#727983"/>
<rect x="312.6" y="416.01" width="888" height="1.4" fill="#727983"/>
<rect x="312.6" y="476.14" width="888" height="1.4" fill="#727983"/>
<rect x="312.6" y="536.27" width="888" height="1.4" fill="#727983"/>
<rect x="312.6" y="596.40" width="888" height="1.4" fill="#727983"/>
<rect x="312.6" y="656.53" width="888" height="1.4" fill="#727983"/>
<rect x="312.6" y="716.66" width="888" height="1.4" fill="#727983"/>
<rect x="312.6" y="776.79" width="888" height="1.4" fill="#727983"/>
<rect x="312.6" y="836.92" width="888" height="1.4" fill="#949ea8"/>
<rect x="312.6" y="117.0" width="43" height="57.20" fill="url(#g_red)"/>
<rect x="312.6" y="173.20" width="43" height="1" fill="#b8663a"/>
<rect x="354.8" y="117.0" width="0.8" height="57.20" fill="#b8663a"/>
<rect x="377.97" y="117.00" width="45.28" height="57.20" fill="url(#g_purple)"/>
<path d="M378.37 174.20 V117.40 H422.85 V174.20" fill="none" stroke="#a078c8" stroke-width="0.9" stroke-opacity="0.7"/>
<rect x="423.25" y="117.00" width="181.12" height="57.20" fill="url(#g_purple)"/>
<path d="M423.65 174.20 V117.40 H603.97 V174.20" fill="none" stroke="#a078c8" stroke-width="0.9" stroke-opacity="0.7"/>
<text x="427.05" y="129.40" font-family='"Liberation Sans", sans-serif' font-size="10" font-weight="bold" fill="#f2f5f6">Pre-Chorus</text>
<rect x="422.80" y="117.00" width="0.9" height="57.20" fill="#b4b4b4" opacity="0.45"/>
<rect x="604.37" y="117.00" width="90.56" height="57.20" fill="url(#g_purple)"/>
<path d="M604.77 174.20 V117.40 H694.53 V174.20" fill="none" stroke="#a078c8" stroke-width="0.9" stroke-opacity="0.7"/>
<text x="608.17" y="129.40" font-family='"Liberation Sans", sans-serif' font-size="10" font-weight="bold" fill="#f2f5f6">Break</text>
<rect x="603.92" y="117.00" width="0.9" height="57.20" fill="#b4b4b4" opacity="0.45"/>
<rect x="694.93" y="117.00" width="135.84" height="57.20" fill="url(#g_purple)"/>
<path d="M695.33 174.20 V117.40 H830.37 V174.20" fill="none" stroke="#a078c8" stroke-width="0.9" stroke-opacity="0.7"/>
<text x="698.73" y="129.40" font-family='"Liberation Sans", sans-serif' font-size="10" font-weight="bold" fill="#f2f5f6">Chorus</text>
<rect x="694.48" y="117.00" width="0.9" height="57.20" fill="#b4b4b4" opacity="0.45"/>
<rect x="830.77" y="117.00" width="90.56" height="57.20" fill="url(#g_purple)"/>
<path d="M831.17 174.20 V117.40 H920.93 V174.20" fill="none" stroke="#a078c8" stroke-width="0.9" stroke-opacity="0.7"/>
<text x="834.57" y="129.40" font-family='"Liberation Sans", sans-serif' font-size="10" font-weight="bold" fill="#f2f5f6">Verse</text>
<rect x="830.32" y="117.00" width="0.9" height="57.20" fill="#b4b4b4" opacity="0.45"/>
<rect x="921.33" y="117.00" width="45.28" height="57.20" fill="url(#g_purple)"/>
<path d="M921.73 174.20 V117.40 H966.21 V174.20" fill="none" stroke="#a078c8" stroke-width="0.9" stroke-opacity="0.7"/>
<rect x="920.88" y="117.00" width="0.9" height="57.20" fill="#b4b4b4" opacity="0.45"/>
<rect x="966.61" y="117.00" width="90.56" height="57.20" fill="url(#g_purple)"/>
<path d="M967.01 174.20 V117.40 H1056.77 V174.20" fill="none" stroke="#a078c8" stroke-width="0.9" stroke-opacity="0.7"/>
<text x="970.41" y="129.40" font-family='"Liberation Sans", sans-serif' font-size="10" font-weight="bold" fill="#f2f5f6">Chorus</text>
<rect x="966.16" y="117.00" width="0.9" height="57.20" fill="#b4b4b4" opacity="0.45"/>
<rect x="1057.17" y="117.00" width="90.56" height="57.20" fill="url(#g_purple)"/>
<path d="M1057.57 174.20 V117.40 H1147.33 V174.20" fill="none" stroke="#a078c8" stroke-width="0.9" stroke-opacity="0.7"/>
<text x="1060.97" y="129.40" font-family='"Liberation Sans", sans-serif' font-size="10" font-weight="bold" fill="#f2f5f6">Verse2</text>
<rect x="1056.72" y="117.00" width="0.9" height="57.20" fill="#b4b4b4" opacity="0.45"/>
<rect x="1147.73" y="117.00" width="45.28" height="57.20" fill="url(#g_purple)"/>
<path d="M1148.13 174.20 V117.40 H1192.61 V174.20" fill="none" stroke="#a078c8" stroke-width="0.9" stroke-opacity="0.7"/>
<rect x="1147.28" y="117.00" width="0.9" height="57.20" fill="#b4b4b4" opacity="0.45"/>
<rect x="423.25" y="237.40" width="84.90" height="57.00" fill="url(#g_teal)"/>
<path d="M423.65 294.40 V237.80 H507.75 V294.40" fill="none" stroke="#5cc4c6" stroke-width="0.9" stroke-opacity="0.7"/>
<text x="427.05" y="249.80" font-family='"Liberation Sans", sans-serif' font-size="10" font-weight="bold" fill="#f2f5f6">Kick</text>
<rect x="513.81" y="237.40" width="84.90" height="57.00" fill="url(#g_teal)"/>
<path d="M514.21 294.40 V237.80 H598.31 V294.40" fill="none" stroke="#5cc4c6" stroke-width="0.9" stroke-opacity="0.7"/>
<text x="517.61" y="249.80" font-family='"Liberation Sans", sans-serif' font-size="10" font-weight="bold" fill="#f2f5f6">Kick</text>
<rect x="694.93" y="237.40" width="90.56" height="57.00" fill="url(#g_teal)"/>
<path d="M695.33 294.40 V237.80 H785.09 V294.40" fill="none" stroke="#5cc4c6" stroke-width="0.9" stroke-opacity="0.7"/>
<text x="698.73" y="249.80" font-family='"Liberation Sans", sans-serif' font-size="10" font-weight="bold" fill="#f2f5f6">Kick</text>
<rect x="785.49" y="237.40" width="39.62" height="57.00" fill="url(#g_teal)"/>
<path d="M785.89 294.40 V237.80 H824.71 V294.40" fill="none" stroke="#5cc4c6" stroke-width="0.9" stroke-opacity="0.7"/>
<rect x="785.04" y="237.40" width="0.9" height="57.00" fill="#b4b4b4" opacity="0.45"/>
<rect x="830.77" y="237.40" width="45.28" height="57.00" fill="url(#g_teal)"/>
<path d="M831.17 294.40 V237.80 H875.65 V294.40" fill="none" stroke="#5cc4c6" stroke-width="0.9" stroke-opacity="0.7"/>
<rect x="876.05" y="237.40" width="45.28" height="57.00" fill="url(#g_teal)"/>
<path d="M876.45 294.40 V237.80 H920.93 V294.40" fill="none" stroke="#5cc4c6" stroke-width="0.9" stroke-opacity="0.7"/>
<rect x="875.60" y="237.40" width="0.9" height="57.00" fill="#b4b4b4" opacity="0.45"/>
<rect x="966.61" y="237.40" width="84.90" height="57.00" fill="url(#g_teal)"/>
<path d="M967.01 294.40 V237.80 H1051.11 V294.40" fill="none" stroke="#5cc4c6" stroke-width="0.9" stroke-opacity="0.7"/>
<text x="970.41" y="249.80" font-family='"Liberation Sans", sans-serif' font-size="10" font-weight="bold" fill="#f2f5f6">Kick</text>
<rect x="1057.17" y="237.40" width="84.90" height="57.00" fill="url(#g_teal)"/>
<path d="M1057.57 294.40 V237.80 H1141.67 V294.40" fill="none" stroke="#5cc4c6" stroke-width="0.9" stroke-opacity="0.7"/>
<text x="1060.97" y="249.80" font-family='"Liberation Sans", sans-serif' font-size="10" font-weight="bold" fill="#f2f5f6">Kick</text>
<rect x="1147.73" y="237.40" width="45.28" height="57.00" fill="url(#g_teal)"/>
<path d="M1148.13 294.40 V237.80 H1192.61 V294.40" fill="none" stroke="#5cc4c6" stroke-width="0.9" stroke-opacity="0.7"/>
<rect x="423.25" y="298.00" width="90.56" height="56.68" fill="url(#g_teal)"/>
<path d="M423.65 354.68 V298.40 H513.41 V354.68" fill="none" stroke="#5cc4c6" stroke-width="0.9" stroke-opacity="0.7"/>
<text x="427.05" y="310.40" font-family='"Liberation Sans", sans-serif' font-size="10" font-weight="bold" fill="#f2f5f6">Clap</text>
<rect x="513.81" y="298.00" width="90.56" height="56.68" fill="url(#g_teal)"/>
<path d="M514.21 354.68 V298.40 H603.97 V354.68" fill="none" stroke="#5cc4c6" stroke-width="0.9" stroke-opacity="0.7"/>
<text x="517.61" y="310.40" font-family='"Liberation Sans", sans-serif' font-size="10" font-weight="bold" fill="#f2f5f6">Clap</text>
<rect x="513.36" y="298.00" width="0.9" height="56.68" fill="#b4b4b4" opacity="0.45"/>
<rect x="604.37" y="298.00" width="45.28" height="56.68" fill="url(#g_teal)"/>
<path d="M604.77 354.68 V298.40 H649.25 V354.68" fill="none" stroke="#5cc4c6" stroke-width="0.9" stroke-opacity="0.7"/>
<rect x="603.92" y="298.00" width="0.9" height="56.68" fill="#b4b4b4" opacity="0.45"/>
<rect x="694.93" y="298.00" width="90.56" height="56.68" fill="url(#g_teal)"/>
<path d="M695.33 354.68 V298.40 H785.09 V354.68" fill="none" stroke="#5cc4c6" stroke-width="0.9" stroke-opacity="0.7"/>
<text x="698.73" y="310.40" font-family='"Liberation Sans", sans-serif' font-size="10" font-weight="bold" fill="#f2f5f6">Clap</text>
<rect x="785.49" y="298.00" width="90.56" height="56.68" fill="url(#g_teal)"/>
<path d="M785.89 354.68 V298.40 H875.65 V354.68" fill="none" stroke="#5cc4c6" stroke-width="0.9" stroke-opacity="0.7"/>
<text x="789.29" y="310.40" font-family='"Liberation Sans", sans-serif' font-size="10" font-weight="bold" fill="#f2f5f6">Clap</text>
<rect x="785.04" y="298.00" width="0.9" height="56.68" fill="#b4b4b4" opacity="0.45"/>
<rect x="876.05" y="298.00" width="45.28" height="56.68" fill="url(#g_teal)"/>
<path d="M876.45 354.68 V298.40 H920.93 V354.68" fill="none" stroke="#5cc4c6" stroke-width="0.9" stroke-opacity="0.7"/>
<rect x="875.60" y="298.00" width="0.9" height="56.68" fill="#b4b4b4" opacity="0.45"/>
<rect x="966.61" y="298.00" width="90.56" height="56.68" fill="url(#g_teal)"/>
<path d="M967.01 354.68 V298.40 H1056.77 V354.68" fill="none" stroke="#5cc4c6" stroke-width="0.9" stroke-opacity="0.7"/>
<text x="970.41" y="310.40" font-family='"Liberation Sans", sans-serif' font-size="10" font-weight="bold" fill="#f2f5f6">Clap</text>
<rect x="1057.17" y="298.00" width="90.56" height="56.68" fill="url(#g_teal)"/>
<path d="M1057.57 354.68 V298.40 H1147.33 V354.68" fill="none" stroke="#5cc4c6" stroke-width="0.9" stroke-opacity="0.7"/>
<text x="1060.97" y="310.40" font-family='"Liberation Sans", sans-serif' font-size="10" font-weight="bold" fill="#f2f5f6">Clap</text>
<rect x="1056.72" y="298.00" width="0.9" height="56.68" fill="#b4b4b4" opacity="0.45"/>
<rect x="1147.73" y="298.00" width="45.28" height="56.68" fill="url(#g_teal)"/>
<path d="M1148.13 354.68 V298.40 H1192.61 V354.68" fill="none" stroke="#5cc4c6" stroke-width="0.9" stroke-opacity="0.7"/>
<rect x="1147.28" y="298.00" width="0.9" height="56.68" fill="#b4b4b4" opacity="0.45"/>
<rect x="423.25" y="358.28" width="90.56" height="56.53" fill="url(#g_teal)"/>
<path d="M423.65 414.81 V358.68 H513.41 V414.81" fill="none" stroke="#5cc4c6" stroke-width="0.9" stroke-opacity="0.7"/>
<text x="427.05" y="370.68" font-family='"Liberation Sans", sans-serif' font-size="10" font-weight="bold" fill="#f2f5f6">Closed HH</text>
<rect x="513.81" y="358.28" width="90.56" height="56.53" fill="url(#g_teal)"/>
<path d="M514.21 414.81 V358.68 H603.97 V414.81" fill="none" stroke="#5cc4c6" stroke-width="0.9" stroke-opacity="0.7"/>
<text x="517.61" y="370.68" font-family='"Liberation Sans", sans-serif' font-size="10" font-weight="bold" fill="#f2f5f6">Closed HH</text>
<rect x="513.36" y="358.28" width="0.9" height="56.53" fill="#b4b4b4" opacity="0.45"/>
<rect x="604.37" y="358.28" width="45.28" height="56.53" fill="url(#g_teal)"/>
<path d="M604.77 414.81 V358.68 H649.25 V414.81" fill="none" stroke="#5cc4c6" stroke-width="0.9" stroke-opacity="0.7"/>
<rect x="603.92" y="358.28" width="0.9" height="56.53" fill="#b4b4b4" opacity="0.45"/>
<rect x="694.93" y="358.28" width="90.56" height="56.53" fill="url(#g_teal)"/>
<path d="M695.33 414.81 V358.68 H785.09 V414.81" fill="none" stroke="#5cc4c6" stroke-width="0.9" stroke-opacity="0.7"/>
<text x="698.73" y="370.68" font-family='"Liberation Sans", sans-serif' font-size="10" font-weight="bold" fill="#f2f5f6">Closed HH</text>
<rect x="785.49" y="358.28" width="45.28" height="56.53" fill="url(#g_teal)"/>
<path d="M785.89 414.81 V358.68 H830.37 V414.81" fill="none" stroke="#5cc4c6" stroke-width="0.9" stroke-opacity="0.7"/>
<rect x="785.04" y="358.28" width="0.9" height="56.53" fill="#b4b4b4" opacity="0.45"/>
<rect x="966.61" y="358.28" width="90.56" height="56.53" fill="url(#g_teal)"/>
<path d="M967.01 414.81 V358.68 H1056.77 V414.81" fill="none" stroke="#5cc4c6" stroke-width="0.9" stroke-opacity="0.7"/>
<text x="970.41" y="370.68" font-family='"Liberation Sans", sans-serif' font-size="10" font-weight="bold" fill="#f2f5f6">Closed HH</text>
<rect x="1057.17" y="358.28" width="45.28" height="56.53" fill="url(#g_teal)"/>
<path d="M1057.57 414.81 V358.68 H1102.05 V414.81" fill="none" stroke="#5cc4c6" stroke-width="0.9" stroke-opacity="0.7"/>
<rect x="1056.72" y="358.28" width="0.9" height="56.53" fill="#b4b4b4" opacity="0.45"/>
<rect x="1147.73" y="358.28" width="45.28" height="56.53" fill="url(#g_teal)"/>
<path d="M1148.13 414.81 V358.68 H1192.61 V414.81" fill="none" stroke="#5cc4c6" stroke-width="0.9" stroke-opacity="0.7"/>
<rect x="423.25" y="418.41" width="90.56" height="56.53" fill="url(#g_teal)"/>
<path d="M423.65 474.94 V418.81 H513.41 V474.94" fill="none" stroke="#5cc4c6" stroke-width="0.9" stroke-opacity="0.7"/>
<text x="427.05" y="430.81" font-family='"Liberation Sans", sans-serif' font-size="10" font-weight="bold" fill="#f2f5f6">Open HH</text>
<rect x="513.81" y="418.41" width="90.56" height="56.53" fill="url(#g_teal)"/>
<path d="M514.21 474.94 V418.81 H603.97 V474.94" fill="none" stroke="#5cc4c6" stroke-width="0.9" stroke-opacity="0.7"/>
<text x="517.61" y="430.81" font-family='"Liberation Sans", sans-serif' font-size="10" font-weight="bold" fill="#f2f5f6">Open HH</text>
<rect x="513.36" y="418.41" width="0.9" height="56.53" fill="#b4b4b4" opacity="0.45"/>
<rect x="649.65" y="418.41" width="45.28" height="56.53" fill="url(#g_teal)"/>
<path d="M650.05 474.94 V418.81 H694.53 V474.94" fill="none" stroke="#5cc4c6" stroke-width="0.9" stroke-opacity="0.7"/>
<rect x="694.93" y="418.41" width="90.56" height="56.53" fill="url(#g_teal)"/>
<path d="M695.33 474.94 V418.81 H785.09 V474.94" fill="none" stroke="#5cc4c6" stroke-width="0.9" stroke-opacity="0.7"/>
<text x="698.73" y="430.81" font-family='"Liberation Sans", sans-serif' font-size="10" font-weight="bold" fill="#f2f5f6">Open HH</text>
<rect x="694.48" y="418.41" width="0.9" height="56.53" fill="#b4b4b4" opacity="0.45"/>
<rect x="785.49" y="418.41" width="45.28" height="56.53" fill="url(#g_teal)"/>
<path d="M785.89 474.94 V418.81 H830.37 V474.94" fill="none" stroke="#5cc4c6" stroke-width="0.9" stroke-opacity="0.7"/>
<rect x="785.04" y="418.41" width="0.9" height="56.53" fill="#b4b4b4" opacity="0.45"/>
<rect x="876.05" y="418.41" width="45.28" height="56.53" fill="url(#g_teal)"/>
<path d="M876.45 474.94 V418.81 H920.93 V474.94" fill="none" stroke="#5cc4c6" stroke-width="0.9" stroke-opacity="0.7"/>
<rect x="966.61" y="418.41" width="90.56" height="56.53" fill="url(#g_teal)"/>
<path d="M967.01 474.94 V418.81 H1056.77 V474.94" fill="none" stroke="#5cc4c6" stroke-width="0.9" stroke-opacity="0.7"/>
<text x="970.41" y="430.81" font-family='"Liberation Sans", sans-serif' font-size="10" font-weight="bold" fill="#f2f5f6">Open HH</text>
<rect x="1057.17" y="418.41" width="45.28" height="56.53" fill="url(#g_teal)"/>
<path d="M1057.57 474.94 V418.81 H1102.05 V474.94" fill="none" stroke="#5cc4c6" stroke-width="0.9" stroke-opacity="0.7"/>
<rect x="1056.72" y="418.41" width="0.9" height="56.53" fill="#b4b4b4" opacity="0.45"/>
<rect x="513.81" y="478.54" width="90.56" height="56.53" fill="url(#g_teal)"/>
<path d="M514.21 535.07 V478.94 H603.97 V535.07" fill="none" stroke="#5cc4c6" stroke-width="0.9" stroke-opacity="0.7"/>
<text x="517.61" y="490.94" font-family='"Liberation Sans", sans-serif' font-size="10" font-weight="bold" fill="#f2f5f6">Perc1</text>
<rect x="694.93" y="478.54" width="90.56" height="56.53" fill="url(#g_teal)"/>
<path d="M695.33 535.07 V478.94 H785.09 V535.07" fill="none" stroke="#5cc4c6" stroke-width="0.9" stroke-opacity="0.7"/>
<text x="698.73" y="490.94" font-family='"Liberation Sans", sans-serif' font-size="10" font-weight="bold" fill="#f2f5f6">Perc1</text>
<rect x="785.49" y="478.54" width="45.28" height="56.53" fill="url(#g_teal)"/>
<path d="M785.89 535.07 V478.94 H830.37 V535.07" fill="none" stroke="#5cc4c6" stroke-width="0.9" stroke-opacity="0.7"/>
<rect x="785.04" y="478.54" width="0.9" height="56.53" fill="#b4b4b4" opacity="0.45"/>
<rect x="876.05" y="478.54" width="45.28" height="56.53" fill="url(#g_teal)"/>
<path d="M876.45 535.07 V478.94 H920.93 V535.07" fill="none" stroke="#5cc4c6" stroke-width="0.9" stroke-opacity="0.7"/>
<rect x="966.61" y="478.54" width="90.56" height="56.53" fill="url(#g_teal)"/>
<path d="M967.01 535.07 V478.94 H1056.77 V535.07" fill="none" stroke="#5cc4c6" stroke-width="0.9" stroke-opacity="0.7"/>
<text x="970.41" y="490.94" font-family='"Liberation Sans", sans-serif' font-size="10" font-weight="bold" fill="#f2f5f6">Perc1</text>
<rect x="1057.17" y="478.54" width="90.56" height="56.53" fill="url(#g_teal)"/>
<path d="M1057.57 535.07 V478.94 H1147.33 V535.07" fill="none" stroke="#5cc4c6" stroke-width="0.9" stroke-opacity="0.7"/>
<text x="1060.97" y="490.94" font-family='"Liberation Sans", sans-serif' font-size="10" font-weight="bold" fill="#f2f5f6">Perc1</text>
<rect x="1056.72" y="478.54" width="0.9" height="56.53" fill="#b4b4b4" opacity="0.45"/>
<rect x="513.81" y="538.67" width="90.56" height="56.53" fill="url(#g_teal)"/>
<path d="M514.21 595.20 V539.07 H603.97 V595.20" fill="none" stroke="#5cc4c6" stroke-width="0.9" stroke-opacity="0.7"/>
<text x="517.61" y="551.07" font-family='"Liberation Sans", sans-serif' font-size="10" font-weight="bold" fill="#f2f5f6">Ride</text>
<rect x="694.93" y="538.67" width="90.56" height="56.53" fill="url(#g_teal)"/>
<path d="M695.33 595.20 V539.07 H785.09 V595.20" fill="none" stroke="#5cc4c6" stroke-width="0.9" stroke-opacity="0.7"/>
<text x="698.73" y="551.07" font-family='"Liberation Sans", sans-serif' font-size="10" font-weight="bold" fill="#f2f5f6">Ride</text>
<rect x="785.49" y="538.67" width="45.28" height="56.53" fill="url(#g_teal)"/>
<path d="M785.89 595.20 V539.07 H830.37 V595.20" fill="none" stroke="#5cc4c6" stroke-width="0.9" stroke-opacity="0.7"/>
<rect x="785.04" y="538.67" width="0.9" height="56.53" fill="#b4b4b4" opacity="0.45"/>
<rect x="966.61" y="538.67" width="90.56" height="56.53" fill="url(#g_teal)"/>
<path d="M967.01 595.20 V539.07 H1056.77 V595.20" fill="none" stroke="#5cc4c6" stroke-width="0.9" stroke-opacity="0.7"/>
<text x="970.41" y="551.07" font-family='"Liberation Sans", sans-serif' font-size="10" font-weight="bold" fill="#f2f5f6">Ride</text>
<rect x="1057.17" y="538.67" width="45.28" height="56.53" fill="url(#g_teal)"/>
<path d="M1057.57 595.20 V539.07 H1102.05 V595.20" fill="none" stroke="#5cc4c6" stroke-width="0.9" stroke-opacity="0.7"/>
<rect x="1056.72" y="538.67" width="0.9" height="56.53" fill="#b4b4b4" opacity="0.45"/>
<rect x="423.25" y="598.80" width="90.56" height="56.53" fill="url(#g_orange)"/>
<path d="M423.65 655.33 V599.20 H513.41 V655.33" fill="none" stroke="#d08a60" stroke-width="0.9" stroke-opacity="0.7"/>
<text x="427.05" y="611.20" font-family='"Liberation Sans", sans-serif' font-size="10" font-weight="bold" fill="#f2f5f6">Bass</text>
<rect x="513.81" y="598.80" width="90.56" height="56.53" fill="url(#g_orange)"/>
<path d="M514.21 655.33 V599.20 H603.97 V655.33" fill="none" stroke="#d08a60" stroke-width="0.9" stroke-opacity="0.7"/>
<text x="517.61" y="611.20" font-family='"Liberation Sans", sans-serif' font-size="10" font-weight="bold" fill="#f2f5f6">Bass</text>
<rect x="513.36" y="598.80" width="0.9" height="56.53" fill="#b4b4b4" opacity="0.45"/>
<rect x="694.93" y="598.80" width="90.56" height="56.53" fill="url(#g_orange)"/>
<path d="M695.33 655.33 V599.20 H785.09 V655.33" fill="none" stroke="#d08a60" stroke-width="0.9" stroke-opacity="0.7"/>
<text x="698.73" y="611.20" font-family='"Liberation Sans", sans-serif' font-size="10" font-weight="bold" fill="#f2f5f6">Bass</text>
<rect x="785.49" y="598.80" width="90.56" height="56.53" fill="url(#g_orange)"/>
<path d="M785.89 655.33 V599.20 H875.65 V655.33" fill="none" stroke="#d08a60" stroke-width="0.9" stroke-opacity="0.7"/>
<text x="789.29" y="611.20" font-family='"Liberation Sans", sans-serif' font-size="10" font-weight="bold" fill="#f2f5f6">Bass</text>
<rect x="785.04" y="598.80" width="0.9" height="56.53" fill="#b4b4b4" opacity="0.45"/>
<rect x="876.05" y="598.80" width="84.90" height="56.53" fill="url(#g_orange)"/>
<path d="M876.45 655.33 V599.20 H960.55 V655.33" fill="none" stroke="#d08a60" stroke-width="0.9" stroke-opacity="0.7"/>
<text x="879.85" y="611.20" font-family='"Liberation Sans", sans-serif' font-size="10" font-weight="bold" fill="#f2f5f6">Bass</text>
<rect x="875.60" y="598.80" width="0.9" height="56.53" fill="#b4b4b4" opacity="0.45"/>
<rect x="966.61" y="598.80" width="90.56" height="56.53" fill="url(#g_orange)"/>
<path d="M967.01 655.33 V599.20 H1056.77 V655.33" fill="none" stroke="#d08a60" stroke-width="0.9" stroke-opacity="0.7"/>
<text x="970.41" y="611.20" font-family='"Liberation Sans", sans-serif' font-size="10" font-weight="bold" fill="#f2f5f6">Bass</text>
<rect x="1057.17" y="598.80" width="90.56" height="56.53" fill="url(#g_orange)"/>
<path d="M1057.57 655.33 V599.20 H1147.33 V655.33" fill="none" stroke="#d08a60" stroke-width="0.9" stroke-opacity="0.7"/>
<text x="1060.97" y="611.20" font-family='"Liberation Sans", sans-serif' font-size="10" font-weight="bold" fill="#f2f5f6">Bass</text>
<rect x="1056.72" y="598.80" width="0.9" height="56.53" fill="#b4b4b4" opacity="0.45"/>
<rect x="377.97" y="658.93" width="45.28" height="56.53" fill="url(#g_green)"/>
<path d="M378.37 715.46 V659.33 H422.85 V715.46" fill="none" stroke="#6cc266" stroke-width="0.9" stroke-opacity="0.7"/>
<rect x="423.25" y="658.93" width="90.56" height="56.53" fill="url(#g_green)"/>
<path d="M423.65 715.46 V659.33 H513.41 V715.46" fill="none" stroke="#6cc266" stroke-width="0.9" stroke-opacity="0.7"/>
<text x="427.05" y="671.33" font-family='"Liberation Sans", sans-serif' font-size="10" font-weight="bold" fill="#f2f5f6">Piano</text>
<rect x="422.80" y="658.93" width="0.9" height="56.53" fill="#b4b4b4" opacity="0.45"/>
<rect x="513.81" y="658.93" width="90.56" height="56.53" fill="url(#g_green)"/>
<path d="M514.21 715.46 V659.33 H603.97 V715.46" fill="none" stroke="#6cc266" stroke-width="0.9" stroke-opacity="0.7"/>
<text x="517.61" y="671.33" font-family='"Liberation Sans", sans-serif' font-size="10" font-weight="bold" fill="#f2f5f6">Piano</text>
<rect x="513.36" y="658.93" width="0.9" height="56.53" fill="#b4b4b4" opacity="0.45"/>
<rect x="604.37" y="658.93" width="90.56" height="56.53" fill="url(#g_green)"/>
<path d="M604.77 715.46 V659.33 H694.53 V715.46" fill="none" stroke="#6cc266" stroke-width="0.9" stroke-opacity="0.7"/>
<text x="608.17" y="671.33" font-family='"Liberation Sans", sans-serif' font-size="10" font-weight="bold" fill="#f2f5f6">Piano</text>
<rect x="603.92" y="658.93" width="0.9" height="56.53" fill="#b4b4b4" opacity="0.45"/>
<rect x="694.93" y="658.93" width="90.56" height="56.53" fill="url(#g_green)"/>
<path d="M695.33 715.46 V659.33 H785.09 V715.46" fill="none" stroke="#6cc266" stroke-width="0.9" stroke-opacity="0.7"/>
<text x="698.73" y="671.33" font-family='"Liberation Sans", sans-serif' font-size="10" font-weight="bold" fill="#f2f5f6">Piano</text>
<rect x="694.48" y="658.93" width="0.9" height="56.53" fill="#b4b4b4" opacity="0.45"/>
<rect x="785.49" y="658.93" width="90.56" height="56.53" fill="url(#g_green)"/>
<path d="M785.89 715.46 V659.33 H875.65 V715.46" fill="none" stroke="#6cc266" stroke-width="0.9" stroke-opacity="0.7"/>
<text x="789.29" y="671.33" font-family='"Liberation Sans", sans-serif' font-size="10" font-weight="bold" fill="#f2f5f6">Piano</text>
<rect x="785.04" y="658.93" width="0.9" height="56.53" fill="#b4b4b4" opacity="0.45"/>
<rect x="876.05" y="658.93" width="84.90" height="56.53" fill="url(#g_green)"/>
<path d="M876.45 715.46 V659.33 H960.55 V715.46" fill="none" stroke="#6cc266" stroke-width="0.9" stroke-opacity="0.7"/>
<text x="879.85" y="671.33" font-family='"Liberation Sans", sans-serif' font-size="10" font-weight="bold" fill="#f2f5f6">Piano</text>
<rect x="875.60" y="658.93" width="0.9" height="56.53" fill="#b4b4b4" opacity="0.45"/>
<rect x="966.61" y="658.93" width="90.56" height="56.53" fill="url(#g_green)"/>
<path d="M967.01 715.46 V659.33 H1056.77 V715.46" fill="none" stroke="#6cc266" stroke-width="0.9" stroke-opacity="0.7"/>
<text x="970.41" y="671.33" font-family='"Liberation Sans", sans-serif' font-size="10" font-weight="bold" fill="#f2f5f6">Piano</text>
<rect x="1057.17" y="658.93" width="90.56" height="56.53" fill="url(#g_green)"/>
<path d="M1057.57 715.46 V659.33 H1147.33 V715.46" fill="none" stroke="#6cc266" stroke-width="0.9" stroke-opacity="0.7"/>
<text x="1060.97" y="671.33" font-family='"Liberation Sans", sans-serif' font-size="10" font-weight="bold" fill="#f2f5f6">Piano</text>
<rect x="1056.72" y="658.93" width="0.9" height="56.53" fill="#b4b4b4" opacity="0.45"/>
<rect x="423.25" y="719.06" width="90.56" height="56.53" fill="url(#g_clav)"/>
<path d="M423.65 775.59 V719.46 H513.41 V775.59" fill="none" stroke="#62cc80" stroke-width="0.9" stroke-opacity="0.7"/>
<text x="427.05" y="731.46" font-family='"Liberation Sans", sans-serif' font-size="10" font-weight="bold" fill="#f2f5f6">Clavinet</text>
<rect x="649.65" y="719.06" width="45.28" height="56.53" fill="url(#g_clav)"/>
<path d="M650.05 775.59 V719.46 H694.53 V775.59" fill="none" stroke="#62cc80" stroke-width="0.9" stroke-opacity="0.7"/>
<rect x="694.93" y="719.06" width="90.56" height="56.53" fill="url(#g_clav)"/>
<path d="M695.33 775.59 V719.46 H785.09 V775.59" fill="none" stroke="#62cc80" stroke-width="0.9" stroke-opacity="0.7"/>
<text x="698.73" y="731.46" font-family='"Liberation Sans", sans-serif' font-size="10" font-weight="bold" fill="#f2f5f6">Clavinet</text>
<rect x="694.48" y="719.06" width="0.9" height="56.53" fill="#b4b4b4" opacity="0.45"/>
<rect x="785.49" y="719.06" width="45.28" height="56.53" fill="url(#g_clav)"/>
<path d="M785.89 775.59 V719.46 H830.37 V775.59" fill="none" stroke="#62cc80" stroke-width="0.9" stroke-opacity="0.7"/>
<rect x="785.04" y="719.06" width="0.9" height="56.53" fill="#b4b4b4" opacity="0.45"/>
<rect x="966.61" y="719.06" width="90.56" height="56.53" fill="url(#g_clav)"/>
<path d="M967.01 775.59 V719.46 H1056.77 V775.59" fill="none" stroke="#62cc80" stroke-width="0.9" stroke-opacity="0.7"/>
<text x="970.41" y="731.46" font-family='"Liberation Sans", sans-serif' font-size="10" font-weight="bold" fill="#f2f5f6">Clavinet</text>
<rect x="1057.17" y="719.06" width="90.56" height="56.53" fill="url(#g_clav)"/>
<path d="M1057.57 775.59 V719.46 H1147.33 V775.59" fill="none" stroke="#62cc80" stroke-width="0.9" stroke-opacity="0.7"/>
<text x="1060.97" y="731.46" font-family='"Liberation Sans", sans-serif' font-size="10" font-weight="bold" fill="#f2f5f6">Clavinet</text>
<rect x="1056.72" y="719.06" width="0.9" height="56.53" fill="#b4b4b4" opacity="0.45"/>
<rect x="604.37" y="779.19" width="45.28" height="56.53" fill="url(#g_vint)"/>
<path d="M604.77 835.72 V779.59 H649.25 V835.72" fill="none" stroke="#5cc8a8" stroke-width="0.9" stroke-opacity="0.7"/>
<rect x="694.93" y="779.19" width="90.56" height="56.53" fill="url(#g_vint)"/>
<path d="M695.33 835.72 V779.59 H785.09 V835.72" fill="none" stroke="#5cc8a8" stroke-width="0.9" stroke-opacity="0.7"/>
<text x="698.73" y="791.59" font-family='"Liberation Sans", sans-serif' font-size="10" font-weight="bold" fill="#f2f5f6">Vintage String</text>
<rect x="785.49" y="779.19" width="45.28" height="56.53" fill="url(#g_vint)"/>
<path d="M785.89 835.72 V779.59 H830.37 V835.72" fill="none" stroke="#5cc8a8" stroke-width="0.9" stroke-opacity="0.7"/>
<rect x="785.04" y="779.19" width="0.9" height="56.53" fill="#b4b4b4" opacity="0.45"/>
<rect x="921.33" y="779.19" width="45.28" height="56.53" fill="url(#g_vint)"/>
<path d="M921.73 835.72 V779.59 H966.21 V835.72" fill="none" stroke="#5cc8a8" stroke-width="0.9" stroke-opacity="0.7"/>
<rect x="966.61" y="779.19" width="90.56" height="56.53" fill="url(#g_vint)"/>
<path d="M967.01 835.72 V779.59 H1056.77 V835.72" fill="none" stroke="#5cc8a8" stroke-width="0.9" stroke-opacity="0.7"/>
<text x="970.41" y="791.59" font-family='"Liberation Sans", sans-serif' font-size="10" font-weight="bold" fill="#f2f5f6">Vintage String</text>
<rect x="966.16" y="779.19" width="0.9" height="56.53" fill="#b4b4b4" opacity="0.45"/>
<rect x="312.6" y="237.40" width="43.2" height="57.00" fill="url(#g_teal)"/>
<path d="M313 294.40 V237.80 H355.4 V294.40" fill="none" stroke="#5cc4c6" stroke-width="0.9" stroke-opacity="0.7"/>
<rect x="312.6" y="298.00" width="43.2" height="56.68" fill="url(#g_teal)"/>
<path d="M313 354.68 V298.40 H355.4 V354.68" fill="none" stroke="#5cc4c6" stroke-width="0.9" stroke-opacity="0.7"/>
<rect x="312.6" y="358.28" width="43.2" height="56.53" fill="url(#g_teal)"/>
<path d="M313 414.81 V358.68 H355.4 V414.81" fill="none" stroke="#5cc4c6" stroke-width="0.9" stroke-opacity="0.7"/>
<rect x="312.6" y="418.41" width="43.2" height="56.53" fill="url(#g_teal)"/>
<path d="M313 474.94 V418.81 H355.4 V474.94" fill="none" stroke="#5cc4c6" stroke-width="0.9" stroke-opacity="0.7"/>
<rect x="312.6" y="478.54" width="43.2" height="56.53" fill="url(#g_teal)"/>
<path d="M313 535.07 V478.94 H355.4 V535.07" fill="none" stroke="#5cc4c6" stroke-width="0.9" stroke-opacity="0.7"/>
<rect x="312.6" y="538.67" width="43.2" height="56.53" fill="url(#g_teal)"/>
<path d="M313 595.20 V539.07 H355.4 V595.20" fill="none" stroke="#5cc4c6" stroke-width="0.9" stroke-opacity="0.7"/>
<rect x="312.6" y="598.80" width="43.2" height="56.53" fill="url(#g_orange)"/>
<path d="M313 655.33 V599.20 H355.4 V655.33" fill="none" stroke="#d08a60" stroke-width="0.9" stroke-opacity="0.7"/>
<rect x="312.6" y="658.93" width="43.2" height="56.53" fill="url(#g_green)"/>
<path d="M313 715.46 V659.33 H355.4 V715.46" fill="none" stroke="#6cc266" stroke-width="0.9" stroke-opacity="0.7"/>
<rect x="312.6" y="719.06" width="43.2" height="56.53" fill="url(#g_clav)"/>
<path d="M313 775.59 V719.46 H355.4 V775.59" fill="none" stroke="#62cc80" stroke-width="0.9" stroke-opacity="0.7"/>
<rect x="312.6" y="779.19" width="43.2" height="56.53" fill="url(#g_vint)"/>
<path d="M313 835.72 V779.59 H355.4 V835.72" fill="none" stroke="#5cc8a8" stroke-width="0.9" stroke-opacity="0.7"/>
<rect x="313" y="263.90" width="42.4" height="5" fill="#12696f"/>
<rect x="313.60" y="323.40" width="1.2" height="5" fill="#12696f"/>
<rect x="316.10" y="323.40" width="1.2" height="5" fill="#12696f"/>
<rect x="318.60" y="323.40" width="1.2" height="5" fill="#12696f"/>
<rect x="321.10" y="323.40" width="1.2" height="5" fill="#12696f"/>
<rect x="323.60" y="323.40" width="1.2" height="5" fill="#12696f"/>
<rect x="326.10" y="323.40" width="1.2" height="5" fill="#12696f"/>
<rect x="328.60" y="323.40" width="1.2" height="5" fill="#12696f"/>
<rect x="331.10" y="323.40" width="1.2" height="5" fill="#12696f"/>
<rect x="333.60" y="323.40" width="1.2" height="5" fill="#12696f"/>
<rect x="336.10" y="323.40" width="1.2" height="5" fill="#12696f"/>
<rect x="338.60" y="323.40" width="1.2" height="5" fill="#12696f"/>
<rect x="341.10" y="323.40" width="1.2" height="5" fill="#12696f"/>
<rect x="343.60" y="323.40" width="1.2" height="5" fill="#12696f"/>
<rect x="346.10" y="323.40" width="1.2" height="5" fill="#12696f"/>
<rect x="348.60" y="323.40" width="1.2" height="5" fill="#12696f"/>
<rect x="351.10" y="323.40" width="1.2" height="5" fill="#12696f"/>
<rect x="353.60" y="323.40" width="1.2" height="5" fill="#12696f"/>
<rect x="313" y="384.78" width="42.4" height="5" fill="#12696f"/>
<rect x="313.40" y="444.91" width="1.6" height="4.6" fill="#12696f" opacity="0.8"/>
<rect x="315.90" y="444.91" width="1.6" height="4.6" fill="#12696f" opacity="0.8"/>
<rect x="318.40" y="444.91" width="1.6" height="4.6" fill="#12696f" opacity="0.8"/>
<rect x="320.90" y="444.91" width="1.6" height="4.6" fill="#12696f" opacity="0.8"/>
<rect x="323.40" y="444.91" width="1.6" height="4.6" fill="#12696f" opacity="0.8"/>
<rect x="325.90" y="444.91" width="1.6" height="4.6" fill="#12696f" opacity="0.8"/>
<rect x="328.40" y="444.91" width="1.6" height="4.6" fill="#12696f" opacity="0.8"/>
<rect x="330.90" y="444.91" width="1.6" height="4.6" fill="#12696f" opacity="0.8"/>
<rect x="333.40" y="444.91" width="1.6" height="4.6" fill="#12696f" opacity="0.8"/>
<rect x="335.90" y="444.91" width="1.6" height="4.6" fill="#12696f" opacity="0.8"/>
<rect x="338.40" y="444.91" width="1.6" height="4.6" fill="#12696f" opacity="0.8"/>
<rect x="340.90" y="444.91" width="1.6" height="4.6" fill="#12696f" opacity="0.8"/>
<rect x="343.40" y="444.91" width="1.6" height="4.6" fill="#12696f" opacity="0.8"/>
<rect x="345.90" y="444.91" width="1.6" height="4.6" fill="#12696f" opacity="0.8"/>
<rect x="348.40" y="444.91" width="1.6" height="4.6" fill="#12696f" opacity="0.8"/>
<rect x="350.90" y="444.91" width="1.6" height="4.6" fill="#12696f" opacity="0.8"/>
<rect x="353.40" y="444.91" width="1.6" height="4.6" fill="#12696f" opacity="0.8"/>
<rect x="313.60" y="500.04" width="1.1" height="4.5" fill="#12696f"/>
<rect x="313.60" y="510.04" width="1.1" height="4.5" fill="#12696f"/>
<rect x="316.10" y="500.04" width="1.1" height="4.5" fill="#12696f"/>
<rect x="316.10" y="510.04" width="1.1" height="4.5" fill="#12696f"/>
<rect x="318.60" y="500.04" width="1.1" height="4.5" fill="#12696f"/>
<rect x="318.60" y="510.04" width="1.1" height="4.5" fill="#12696f"/>
<rect x="321.10" y="500.04" width="1.1" height="4.5" fill="#12696f"/>
<rect x="321.10" y="510.04" width="1.1" height="4.5" fill="#12696f"/>
<rect x="323.60" y="500.04" width="1.1" height="4.5" fill="#12696f"/>
<rect x="323.60" y="510.04" width="1.1" height="4.5" fill="#12696f"/>
<rect x="326.10" y="500.04" width="1.1" height="4.5" fill="#12696f"/>
<rect x="326.10" y="510.04" width="1.1" height="4.5" fill="#12696f"/>
<rect x="328.60" y="500.04" width="1.1" height="4.5" fill="#12696f"/>
<rect x="328.60" y="510.04" width="1.1" height="4.5" fill="#12696f"/>
<rect x="331.10" y="500.04" width="1.1" height="4.5" fill="#12696f"/>
<rect x="331.10" y="510.04" width="1.1" height="4.5" fill="#12696f"/>
<rect x="333.60" y="500.04" width="1.1" height="4.5" fill="#12696f"/>
<rect x="333.60" y="510.04" width="1.1" height="4.5" fill="#12696f"/>
<rect x="336.10" y="500.04" width="1.1" height="4.5" fill="#12696f"/>
<rect x="336.10" y="510.04" width="1.1" height="4.5" fill="#12696f"/>
<rect x="338.60" y="500.04" width="1.1" height="4.5" fill="#12696f"/>
<rect x="338.60" y="510.04" width="1.1" height="4.5" fill="#12696f"/>
<rect x="341.10" y="500.04" width="1.1" height="4.5" fill="#12696f"/>
<rect x="341.10" y="510.04" width="1.1" height="4.5" fill="#12696f"/>
<rect x="343.60" y="500.04" width="1.1" height="4.5" fill="#12696f"/>
<rect x="343.60" y="510.04" width="1.1" height="4.5" fill="#12696f"/>
<rect x="346.10" y="500.04" width="1.1" height="4.5" fill="#12696f"/>
<rect x="346.10" y="510.04" width="1.1" height="4.5" fill="#12696f"/>
<rect x="348.60" y="500.04" width="1.1" height="4.5" fill="#12696f"/>
<rect x="348.60" y="510.04" width="1.1" height="4.5" fill="#12696f"/>
<rect x="351.10" y="500.04" width="1.1" height="4.5" fill="#12696f"/>
<rect x="351.10" y="510.04" width="1.1" height="4.5" fill="#12696f"/>
<rect x="353.60" y="500.04" width="1.1" height="4.5" fill="#12696f"/>
<rect x="353.60" y="510.04" width="1.1" height="4.5" fill="#12696f"/>
<rect x="313" y="565.17" width="42.4" height="4.5" fill="#12696f"/>
<rect x="319.6" y="604.60" width="2.2" height="4.2" fill="#7d3322"/>
<rect x="330.6" y="604.60" width="2.2" height="4.2" fill="#7d3322"/>
<rect x="342" y="604.60" width="2.2" height="4.2" fill="#7d3322"/>
<rect x="353" y="604.60" width="2.2" height="4.2" fill="#7d3322"/>
<rect x="316.4" y="613.60" width="2.4" height="4.2" fill="#7d3322"/>
<rect x="328" y="613.60" width="2.4" height="4.2" fill="#7d3322"/>
<rect x="339.4" y="613.60" width="2.4" height="4.2" fill="#7d3322"/>
<rect x="350.6" y="613.60" width="2.4" height="4.2" fill="#7d3322"/>
<rect x="314" y="627.60" width="2.6" height="4.2" fill="#7d3322"/>
<rect x="322" y="627.60" width="2.6" height="4.2" fill="#7d3322"/>
<rect x="325" y="627.60" width="2.6" height="4.2" fill="#7d3322"/>
<rect x="333" y="627.60" width="2.6" height="4.2" fill="#7d3322"/>
<rect x="336.5" y="627.60" width="2.6" height="4.2" fill="#7d3322"/>
<rect x="345" y="627.60" width="2.6" height="4.2" fill="#7d3322"/>
<rect x="348.5" y="627.60" width="2.6" height="4.2" fill="#7d3322"/>
<rect x="323.5" y="646.20" width="1" height="4.2" fill="#7d3322"/>
<rect x="335" y="646.20" width="1" height="4.2" fill="#7d3322"/>
<rect x="346" y="646.20" width="1" height="4.2" fill="#7d3322"/>
<rect x="315.00" y="663.43" width="1.2" height="1.1" fill="#236f2a"/>
<rect x="320.60" y="663.43" width="1.2" height="1.1" fill="#236f2a"/>
<rect x="326.20" y="663.43" width="1.2" height="1.1" fill="#236f2a"/>
<rect x="331.80" y="663.43" width="1.2" height="1.1" fill="#236f2a"/>
<rect x="337.40" y="663.43" width="1.2" height="1.1" fill="#236f2a"/>
<rect x="343.00" y="663.43" width="1.2" height="1.1" fill="#236f2a"/>
<rect x="348.60" y="663.43" width="1.2" height="1.1" fill="#236f2a"/>
<rect x="354.20" y="663.43" width="1.2" height="1.1" fill="#236f2a"/>
<rect x="313.50" y="666.93" width="1.2" height="1.1" fill="#236f2a"/>
<rect x="315.40" y="666.93" width="1.2" height="1.1" fill="#236f2a"/>
<rect x="317.30" y="666.93" width="1.2" height="1.1" fill="#236f2a"/>
<rect x="319.20" y="666.93" width="1.2" height="1.1" fill="#236f2a"/>
<rect x="321.10" y="666.93" width="1.2" height="1.1" fill="#236f2a"/>
<rect x="323.00" y="666.93" width="1.2" height="1.1" fill="#236f2a"/>
<rect x="324.90" y="666.93" width="1.2" height="1.1" fill="#236f2a"/>
<rect x="326.80" y="666.93" width="1.2" height="1.1" fill="#236f2a"/>
<rect x="328.70" y="666.93" width="1.2" height="1.1" fill="#236f2a"/>
<rect x="330.60" y="666.93" width="1.2" height="1.1" fill="#236f2a"/>
<rect x="332.50" y="666.93" width="1.2" height="1.1" fill="#236f2a"/>
<rect x="334.40" y="666.93" width="1.2" height="1.1" fill="#236f2a"/>
<rect x="336.30" y="666.93" width="1.2" height="1.1" fill="#236f2a"/>
<rect x="338.20" y="666.93" width="1.2" height="1.1" fill="#236f2a"/>
<rect x="340.10" y="666.93" width="1.2" height="1.1" fill="#236f2a"/>
<rect x="342.00" y="666.93" width="1.2" height="1.1" fill="#236f2a"/>
<rect x="343.90" y="666.93" width="1.2" height="1.1" fill="#236f2a"/>
<rect x="345.80" y="666.93" width="1.2" height="1.1" fill="#236f2a"/>
<rect x="347.70" y="666.93" width="1.2" height="1.1" fill="#236f2a"/>
<rect x="349.60" y="666.93" width="1.2" height="1.1" fill="#236f2a"/>
<rect x="351.50" y="666.93" width="1.2" height="1.1" fill="#236f2a"/>
<rect x="353.40" y="666.93" width="1.2" height="1.1" fill="#236f2a"/>
<rect x="314.50" y="668.53" width="1.2" height="1.1" fill="#236f2a"/>
<rect x="317.40" y="668.53" width="1.2" height="1.1" fill="#236f2a"/>
<rect x="320.30" y="668.53" width="1.2" height="1.1" fill="#236f2a"/>
<rect x="323.20" y="668.53" width="1.2" height="1.1" fill="#236f2a"/>
<rect x="326.10" y="668.53" width="1.2" height="1.1" fill="#236f2a"/>
<rect x="329.00" y="668.53" width="1.2" height="1.1" fill="#236f2a"/>
<rect x="331.90" y="668.53" width="1.2" height="1.1" fill="#236f2a"/>
<rect x="334.80" y="668.53" width="1.2" height="1.1" fill="#236f2a"/>
<rect x="337.70" y="668.53" width="1.2" height="1.1" fill="#236f2a"/>
<rect x="340.60" y="668.53" width="1.2" height="1.1" fill="#236f2a"/>
<rect x="343.50" y="668.53" width="1.2" height="1.1" fill="#236f2a"/>
<rect x="346.40" y="668.53" width="1.2" height="1.1" fill="#236f2a"/>
<rect x="349.30" y="668.53" width="1.2" height="1.1" fill="#236f2a"/>
<rect x="352.20" y="668.53" width="1.2" height="1.1" fill="#236f2a"/>
<rect x="314.00" y="671.93" width="1.2" height="1.1" fill="#236f2a"/>
<rect x="316.10" y="671.93" width="1.2" height="1.1" fill="#236f2a"/>
<rect x="318.20" y="671.93" width="1.2" height="1.1" fill="#236f2a"/>
<rect x="320.30" y="671.93" width="1.2" height="1.1" fill="#236f2a"/>
<rect x="322.40" y="671.93" width="1.2" height="1.1" fill="#236f2a"/>
<rect x="324.50" y="671.93" width="1.2" height="1.1" fill="#236f2a"/>
<rect x="326.60" y="671.93" width="1.2" height="1.1" fill="#236f2a"/>
<rect x="328.70" y="671.93" width="1.2" height="1.1" fill="#236f2a"/>
<rect x="330.80" y="671.93" width="1.2" height="1.1" fill="#236f2a"/>
<rect x="332.90" y="671.93" width="1.2" height="1.1" fill="#236f2a"/>
<rect x="335.00" y="671.93" width="1.2" height="1.1" fill="#236f2a"/>
<rect x="337.10" y="671.93" width="1.2" height="1.1" fill="#236f2a"/>
<rect x="339.20" y="671.93" width="1.2" height="1.1" fill="#236f2a"/>
<rect x="341.30" y="671.93" width="1.2" height="1.1" fill="#236f2a"/>
<rect x="343.40" y="671.93" width="1.2" height="1.1" fill="#236f2a"/>
<rect x="345.50" y="671.93" width="1.2" height="1.1" fill="#236f2a"/>
<rect x="347.60" y="671.93" width="1.2" height="1.1" fill="#236f2a"/>
<rect x="349.70" y="671.93" width="1.2" height="1.1" fill="#236f2a"/>
<rect x="351.80" y="671.93" width="1.2" height="1.1" fill="#236f2a"/>
<rect x="353.90" y="671.93" width="1.2" height="1.1" fill="#236f2a"/>
<rect x="314.50" y="675.93" width="1.2" height="1.1" fill="#236f2a"/>
<rect x="316.80" y="675.93" width="1.2" height="1.1" fill="#236f2a"/>
<rect x="319.10" y="675.93" width="1.2" height="1.1" fill="#236f2a"/>
<rect x="321.40" y="675.93" width="1.2" height="1.1" fill="#236f2a"/>
<rect x="323.70" y="675.93" width="1.2" height="1.1" fill="#236f2a"/>
<rect x="326.00" y="675.93" width="1.2" height="1.1" fill="#236f2a"/>
<rect x="328.30" y="675.93" width="1.2" height="1.1" fill="#236f2a"/>
<rect x="330.60" y="675.93" width="1.2" height="1.1" fill="#236f2a"/>
<rect x="332.90" y="675.93" width="1.2" height="1.1" fill="#236f2a"/>
<rect x="335.20" y="675.93" width="1.2" height="1.1" fill="#236f2a"/>
<rect x="337.50" y="675.93" width="1.2" height="1.1" fill="#236f2a"/>
<rect x="339.80" y="675.93" width="1.2" height="1.1" fill="#236f2a"/>
<rect x="342.10" y="675.93" width="1.2" height="1.1" fill="#236f2a"/>
<rect x="344.40" y="675.93" width="1.2" height="1.1" fill="#236f2a"/>
<rect x="346.70" y="675.93" width="1.2" height="1.1" fill="#236f2a"/>
<rect x="349.00" y="675.93" width="1.2" height="1.1" fill="#236f2a"/>
<rect x="351.30" y="675.93" width="1.2" height="1.1" fill="#236f2a"/>
<rect x="353.60" y="675.93" width="1.2" height="1.1" fill="#236f2a"/>
<rect x="316.50" y="679.43" width="1.2" height="1.1" fill="#236f2a"/>
<rect x="322.10" y="679.43" width="1.2" height="1.1" fill="#236f2a"/>
<rect x="327.70" y="679.43" width="1.2" height="1.1" fill="#236f2a"/>
<rect x="333.30" y="679.43" width="1.2" height="1.1" fill="#236f2a"/>
<rect x="338.90" y="679.43" width="1.2" height="1.1" fill="#236f2a"/>
<rect x="344.50" y="679.43" width="1.2" height="1.1" fill="#236f2a"/>
<rect x="350.10" y="679.43" width="1.2" height="1.1" fill="#236f2a"/>
<rect x="315.50" y="685.93" width="1.2" height="1.1" fill="#236f2a"/>
<rect x="321.10" y="685.93" width="1.2" height="1.1" fill="#236f2a"/>
<rect x="326.70" y="685.93" width="1.2" height="1.1" fill="#236f2a"/>
<rect x="332.30" y="685.93" width="1.2" height="1.1" fill="#236f2a"/>
<rect x="337.90" y="685.93" width="1.2" height="1.1" fill="#236f2a"/>
<rect x="343.50" y="685.93" width="1.2" height="1.1" fill="#236f2a"/>
<rect x="349.10" y="685.93" width="1.2" height="1.1" fill="#236f2a"/>
<rect x="314.00" y="689.93" width="1.2" height="1.1" fill="#236f2a"/>
<rect x="319.60" y="689.93" width="1.2" height="1.1" fill="#236f2a"/>
<rect x="325.20" y="689.93" width="1.2" height="1.1" fill="#236f2a"/>
<rect x="330.80" y="689.93" width="1.2" height="1.1" fill="#236f2a"/>
<rect x="336.40" y="689.93" width="1.2" height="1.1" fill="#236f2a"/>
<rect x="342.00" y="689.93" width="1.2" height="1.1" fill="#236f2a"/>
<rect x="347.60" y="689.93" width="1.2" height="1.1" fill="#236f2a"/>
<rect x="353.20" y="689.93" width="1.2" height="1.1" fill="#236f2a"/>
<rect x="316.00" y="700.93" width="1.2" height="1.1" fill="#236f2a"/>
<rect x="321.60" y="700.93" width="1.2" height="1.1" fill="#236f2a"/>
<rect x="327.20" y="700.93" width="1.2" height="1.1" fill="#236f2a"/>
<rect x="332.80" y="700.93" width="1.2" height="1.1" fill="#236f2a"/>
<rect x="338.40" y="700.93" width="1.2" height="1.1" fill="#236f2a"/>
<rect x="344.00" y="700.93" width="1.2" height="1.1" fill="#236f2a"/>
<rect x="349.60" y="700.93" width="1.2" height="1.1" fill="#236f2a"/>
<rect x="314.50" y="704.93" width="1.2" height="1.1" fill="#236f2a"/>
<rect x="316.70" y="704.93" width="1.2" height="1.1" fill="#236f2a"/>
<rect x="318.90" y="704.93" width="1.2" height="1.1" fill="#236f2a"/>
<rect x="321.10" y="704.93" width="1.2" height="1.1" fill="#236f2a"/>
<rect x="323.30" y="704.93" width="1.2" height="1.1" fill="#236f2a"/>
<rect x="325.50" y="704.93" width="1.2" height="1.1" fill="#236f2a"/>
<rect x="327.70" y="704.93" width="1.2" height="1.1" fill="#236f2a"/>
<rect x="329.90" y="704.93" width="1.2" height="1.1" fill="#236f2a"/>
<rect x="332.10" y="704.93" width="1.2" height="1.1" fill="#236f2a"/>
<rect x="334.30" y="704.93" width="1.2" height="1.1" fill="#236f2a"/>
<rect x="336.50" y="704.93" width="1.2" height="1.1" fill="#236f2a"/>
<rect x="338.70" y="704.93" width="1.2" height="1.1" fill="#236f2a"/>
<rect x="340.90" y="704.93" width="1.2" height="1.1" fill="#236f2a"/>
<rect x="343.10" y="704.93" width="1.2" height="1.1" fill="#236f2a"/>
<rect x="345.30" y="704.93" width="1.2" height="1.1" fill="#236f2a"/>
<rect x="347.50" y="704.93" width="1.2" height="1.1" fill="#236f2a"/>
<rect x="349.70" y="704.93" width="1.2" height="1.1" fill="#236f2a"/>
<rect x="351.90" y="704.93" width="1.2" height="1.1" fill="#236f2a"/>
<rect x="354.10" y="704.93" width="1.2" height="1.1" fill="#236f2a"/>
<rect x="314.50" y="710.43" width="1.2" height="1.1" fill="#236f2a"/>
<rect x="320.10" y="710.43" width="1.2" height="1.1" fill="#236f2a"/>
<rect x="325.70" y="710.43" width="1.2" height="1.1" fill="#236f2a"/>
<rect x="331.30" y="710.43" width="1.2" height="1.1" fill="#236f2a"/>
<rect x="336.90" y="710.43" width="1.2" height="1.1" fill="#236f2a"/>
<rect x="342.50" y="710.43" width="1.2" height="1.1" fill="#236f2a"/>
<rect x="348.10" y="710.43" width="1.2" height="1.1" fill="#236f2a"/>
<rect x="353.70" y="710.43" width="1.2" height="1.1" fill="#236f2a"/>
<rect x="313.40" y="748.06" width="2.2" height="4.5" fill="#1f7a3b"/>
<rect x="316.40" y="748.06" width="2.2" height="4.5" fill="#1f7a3b"/>
<rect x="319.40" y="748.06" width="2.2" height="4.5" fill="#1f7a3b"/>
<rect x="322.40" y="748.06" width="2.2" height="4.5" fill="#1f7a3b"/>
<rect x="325.40" y="748.06" width="2.2" height="4.5" fill="#1f7a3b"/>
<rect x="328.40" y="748.06" width="2.2" height="4.5" fill="#1f7a3b"/>
<rect x="331.40" y="748.06" width="2.2" height="4.5" fill="#1f7a3b"/>
<rect x="334.40" y="748.06" width="2.2" height="4.5" fill="#1f7a3b"/>
<rect x="337.40" y="748.06" width="2.2" height="4.5" fill="#1f7a3b"/>
<rect x="340.40" y="748.06" width="2.2" height="4.5" fill="#1f7a3b"/>
<rect x="343.40" y="748.06" width="2.2" height="4.5" fill="#1f7a3b"/>
<rect x="346.40" y="748.06" width="2.2" height="4.5" fill="#1f7a3b"/>
<rect x="349.40" y="748.06" width="2.2" height="4.5" fill="#1f7a3b"/>
<rect x="352.40" y="748.06" width="2.2" height="4.5" fill="#1f7a3b"/>
<rect x="332" y="741.56" width="0.8" height="7" fill="#1f7a3b"/>
<rect x="313.00" y="803.19" width="8.6" height="4.6" fill="#106c50"/>
<rect x="319.60" y="809.19" width="1" height="4.4" fill="#106c50"/>
<rect x="323.60" y="803.19" width="8.6" height="4.6" fill="#106c50"/>
<rect x="330.80" y="809.19" width="1" height="4.4" fill="#106c50"/>
<rect x="334.20" y="803.19" width="8.6" height="4.6" fill="#106c50"/>
<rect x="342.00" y="809.19" width="1" height="4.4" fill="#106c50"/>
<rect x="344.80" y="803.19" width="8.6" height="4.6" fill="#106c50"/>
<rect x="353.20" y="809.19" width="1" height="4.4" fill="#106c50"/>
<rect x="307.8" y="80.8" width="1.4" height="819" fill="#c6c8d0"/>
<rect x="309.2" y="80.8" width="1.6" height="819" fill="#000"/>
<rect x="310.8" y="80.8" width="1.8" height="819" fill="#a9b5c0"/>
<rect x="449" y="887.4" width="302" height="5.2" rx="2.6" fill="#5a626c"/>
</svg>
<svg id="icons" width="1200" height="899" viewBox="0 0 1200 899" style="position:absolute;left:0;top:0">
<g stroke="#cbd4da" stroke-width="1.3" stroke-linejoin="round" fill="none"><path d="M28.4 6.6 L36.6 13.2 V16.2 L28.4 24.2 L20.2 17.2 V13.5 Z"/></g>
<path d="M20.2 13.6 L28.4 18.8 V24.2 L20.2 17.2 Z" fill="#cbd4da"/>
<rect x="77.9" y="6.4" width="15" height="17.6" fill="#cbd4da"/>
<g fill="#2e3640"><rect x="81" y="6" width="3.2" height="9.2"/><rect x="86.2" y="6" width="3.6" height="9.2"/><rect x="81.8" y="15" width="1.3" height="9.4"/><rect x="87.3" y="15" width="1.3" height="9.4"/></g>
<g fill="#cbd4da"><rect x="135" y="6.3" width="1.2" height="18.2"/><rect x="141.9" y="6.3" width="1.2" height="18.2"/><rect x="148.8" y="6.3" width="1.2" height="18.2"/>
<rect x="133.1" y="10.4" width="4.9" height="7.1" fill="#dfeaea"/><rect x="140" y="13" width="4.9" height="7" fill="#dfeaea"/><rect x="146.9" y="9.2" width="4.9" height="7.1" fill="#dfeaea"/></g>
<g fill="#3a434d"><rect x="134.4" y="13.4" width="2.4" height="1.1"/><rect x="141.3" y="16" width="2.4" height="1.1"/><rect x="148.2" y="12.2" width="2.4" height="1.1"/></g>
<g stroke="#cbd4da" stroke-width="2.7" stroke-linejoin="round" stroke-linecap="round" fill="none">
<path d="M443.4 14.6 V30.4" stroke-width="2.9"/><path d="M460.6 14.8 V30.2 L447.8 22.5 Z"/>
<path d="M501.2 14.8 V30.2 L514.2 22.5 Z"/><path d="M518.8 14.6 V30.4" stroke-width="2.9"/>
<path d="M565.4 22 L556.8 30.4 H574 A7.9 7.9 0 0 0 574 14.6 H569.4"/>
<path d="M620.3 14.8 V30.2 L634.8 22.5 Z" stroke-width="2.9"/>
<circle cx="685.5" cy="22.3" r="7.7" stroke-width="3.1"/>
<path d="M746 14.9 H743 L736.6 30.2 H751.8 L749.6 24.6" stroke-width="2.7"/>
<path d="M744.4 26.8 L748.4 17.2" stroke-width="1.9"/><circle cx="749.5" cy="15" r="2" stroke-width="1.3"/>
</g>
<g stroke="#cbd4da" stroke-width="1.4" fill="none" stroke-linejoin="round"><path d="M1051.4 12.3 H1063.2 L1064.6 23.6 H1050 Z"/><path d="M1053.8 12.2 V10.2 A3.5 3.5 0 0 1 1060.8 10.2 V12.2"/></g>
<rect x="1052.8" y="15.8" width="8.6" height="5.2" fill="#cbd4da" opacity="0.9"/>
<path d="M1112.43 8.98 L1112.53 6.62 L1115.47 6.62 L1115.57 8.98 L1117.64 9.84 L1119.39 8.24 L1121.46 10.31 L1119.86 12.06 L1120.72 14.13 L1123.08 14.23 L1123.08 17.17 L1120.72 17.27 L1119.86 19.34 L1121.46 21.09 L1119.39 23.16 L1117.64 21.56 L1115.57 22.42 L1115.47 24.78 L1112.53 24.78 L1112.43 22.42 L1110.36 21.56 L1108.61 23.16 L1106.54 21.09 L1108.14 19.34 L1107.28 17.27 L1104.92 17.17 L1104.92 14.23 L1107.28 14.13 L1108.14 12.06 L1106.54 10.31 L1108.61 8.24 L1110.36 9.84 Z" fill="#cbd4da" stroke="#cbd4da" stroke-width="0.8" stroke-linejoin="round"/>
<circle cx="1114" cy="15.7" r="4.7" fill="#2e3640"/>
<circle cx="1114" cy="15.7" r="2.5" fill="none" stroke="#cbd4da" stroke-width="1.7"/>
<text y="24.2" font-family='"Liberation Sans", sans-serif' font-weight="bold" font-size="24" fill="#cbd4da" transform="translate(1171.6 0) scale(1.22 1) translate(-1171.6 0)" text-anchor="middle" x="1171.6">?</text>
<circle cx="1189.8" cy="10.2" r="2.4" fill="#d8824e"/>
<rect x="19.9" y="50.9" width="18.4" height="13.4" rx="0.4" fill="#272d37" stroke="#cbd4da" stroke-width="1.3"/>
<path d="M37.4 60.4 V63.4 H34.2 Z" fill="#cbd4da"/>
<g stroke="#48505a" fill="none" stroke-linecap="round"><path d="M99.9 64.5 L108.6 54.6" stroke-width="1.7"/><path d="M103.6 60.8 L109.6 57.4" stroke-width="1.2"/><circle cx="107.3" cy="52.3" r="1.8" stroke-width="1.2"/><circle cx="111.4" cy="56.5" r="1.9" stroke-width="1.2"/></g>
<g stroke="#48505a" fill="none"><path d="M180.4 60.4 L189.2 52.2" stroke-width="3.8" stroke-linecap="round"/><path d="M176.6 64.6 L180.6 60.4" stroke-width="1.7" stroke-linecap="round"/></g>
<g stroke="#48505a" stroke-width="1.2" fill="none" stroke-linejoin="round"><path d="M252.8 61 L260.2 51.6 H271.6 L264.8 61 Z"/><path d="M271.6 51.6 V55.4 L264.8 64.6"/></g>
<rect x="252.2" y="60.8" width="12.8" height="4" fill="#48505a"/>
<g stroke="#cbd4da" stroke-width="1.3" fill="none" stroke-linejoin="round"><path d="M335.2 59.6 L342.6 51 L346.2 54.2 L338.8 63 Z"/><path d="M340.4 53.4 L344.2 56.6"/></g>
<path d="M335.2 59.4 L339 63 L332.6 64.8 Z" fill="#cbd4da" stroke="#cbd4da" stroke-width="0.8" stroke-linejoin="round"/>
<path d="M410.8 55.3 H415 L421.3 50.7 V65.3 L415 60.7 H410.8 Z" fill="#48505a"/>
<path d="M484.2 59.3 H490 V52.3 H497.5 V63.2 H503.3" fill="none" stroke="#48505a" stroke-width="1.4"/>
<g stroke="#48505a" stroke-width="1.3" fill="none" stroke-linecap="round"><circle cx="567.5" cy="58" r="5.6"/><path d="M569.8 60.6 L574.2 64.8"/></g>
<path d="M597.5 48.2 V56.6 L603.2 62.7 L597.5 69 V78.4" fill="none" stroke="#cbd4da" stroke-width="1.4" stroke-linejoin="round"/>
<rect x="694" y="51.6" width="21.2" height="12.8" rx="1.8" fill="none" stroke="#48505a" stroke-width="1.4"/>
<path d="M691 55.6 V60.8 L687.4 58.2 Z M718.2 55.6 V60.8 L721.8 58.2 Z" fill="#48505a"/>
<g fill="#48505a"><path d="M793.4 52 V59.7 H801.6 Z"/><path d="M796.2 55 C799.6 51.4 809.4 51.4 809.4 59.6 C809.4 62.2 808.2 64.2 806.5 65.6 C807.6 61.4 807.2 54.8 801.4 55.6 C800.2 55.8 799.2 56.6 798.4 57.6 Z"/></g>
<g transform="translate(1680.5 0) scale(-1 1)" fill="#48505a"><path d="M793.4 52 V59.7 H801.6 Z"/><path d="M796.2 55 C799.6 51.4 809.4 51.4 809.4 59.6 C809.4 62.2 808.2 64.2 806.5 65.6 C807.6 61.4 807.2 54.8 801.4 55.6 C800.2 55.8 799.2 56.6 798.4 57.6 Z"/></g>
<g stroke="#48505a" fill="none" stroke-width="1"><circle cx="816" cy="52.2" r="3.2"/><circle cx="894" cy="52.2" r="3.2"/></g><circle cx="816" cy="52.2" r="1.1" fill="#48505a"/><circle cx="894" cy="52.2" r="1.1" fill="#48505a"/>
<g stroke="#3f4751" stroke-width="1.3" fill="none"><rect x="969.6" y="50.8" width="10.8" height="10.6" rx="1.2"/><rect x="973.8" y="54.4" width="10.8" height="10.2" rx="1.2"/></g>
<g stroke="#3f4751" stroke-width="1.3" fill="none"><rect x="1045.8" y="50.8" width="12.2" height="9.2" rx="1"/><rect x="1050.4" y="54.8" width="12.2" height="9.8" rx="1"/><path d="M1052.6 54.4 L1059.6 61.6 M1055.6 61.8 H1059.8 V57.6"/></g>
<g stroke="#cbd4da" stroke-width="1.6"><path d="M1146.9 50.2 V64.8 M1156.2 50.2 V64.8 M1142.6 54.4 H1160.2 M1142.6 61.6 H1160.2"/></g>
<circle cx="1166.3" cy="52.2" r="3" fill="none" stroke="#cbd4da" stroke-width="0.9"/><circle cx="1166.3" cy="52.2" r="1" fill="#cbd4da"/>
<g fill="#a9b1ba"><rect x="198" y="97" width="6.8" height="3.8"/><rect x="207.5" y="92" width="1.6" height="15"/><path d="M204.6 90.8 H212 L209.1 94.8 H207.5 Z"/><rect x="211.7" y="97" width="3" height="3.8"/><path d="M214.2 95 V102.8 L219.6 98.9 Z"/></g>
<g fill="#c9cfd5"><rect x="201" y="873.2" width="15" height="4.6" rx="0.6"/><rect x="242" y="873.2" width="14.4" height="4.6"/><rect x="246.9" y="868.2" width="4.6" height="14.8"/></g>
<path d="M281.4 871.6 L290 880 L298.6 871.6" fill="none" stroke="#c9cfd5" stroke-width="3"/>
<path d="M278.8 869.6 H285 L278.8 875.8 Z M301.2 869.6 H295 L301.2 875.8 Z" fill="#c9cfd5"/>
<path d="M157.8 103 L170.8 96 V110 Z" fill="#fff"/>
<g stroke="#1a2029" stroke-width="1.3" fill="none"><rect x="158" y="137.3" width="3.8" height="4" fill="#a4adb6"/><rect x="169.8" y="133" width="3.8" height="4" fill="#a4adb6"/><rect x="169.8" y="141.6" width="3.8" height="4" fill="#a4adb6"/><path d="M161.8 139.3 H165.5 M165.5 135 V143.6 M165.5 135 H169.8 M165.5 143.6 H169.8" stroke-width="1"/></g>
<path d="M160.4 183 V170.6 A4.6 4.6 0 0 1 169.6 170.6 C169.6 174.4 172.4 174.6 172.4 178 V183 Z" fill="#8b959f" stroke="#1a2029" stroke-width="1.3" stroke-linejoin="round"/>
<rect x="159.8" y="181" width="13.2" height="2.7" fill="#1a2029"/>
<g stroke="#1a2029" stroke-width="1.3" fill="none"><rect x="161.6" y="207" width="8.6" height="8.4" fill="#8b959f"/><path d="M155.4 211.3 H161.6 M170.2 211.3 H176" stroke-width="1.2"/></g>
<g stroke="#1a2029" stroke-width="1.3" fill="none"><rect x="161.6" y="240.6" width="8.6" height="8.2" fill="#8b959f"/><path d="M165.8 248.8 V254 M156.2 254 H174.8" stroke-width="1.2"/></g>
<g stroke="#1a2029" stroke-width="1.3" fill="none"><circle cx="165.8" cy="283.1" r="4.2" fill="#8b959f"/><path d="M155.4 283.1 H161.6 M170 283.1 H176" stroke-width="1.2"/></g>
<g stroke="#1a2029" stroke-width="1.3" fill="none" stroke-width="1.2"><path d="M160.8 322 L165 315.6 M167.4 315.4 L170.6 319.6"/><circle cx="166" cy="314" r="1.9"/><circle cx="159.8" cy="323.6" r="1.9"/><circle cx="171.9" cy="321.1" r="1.9"/></g>
<path d="M166.4 347.6 H158 V363 H173.6 V353.6" stroke="#1a2029" stroke-width="1.3" fill="none" stroke-width="1.3"/>
<path d="M161 359.4 L162 356.4 L169.6 349.6 L172.2 352 L164.4 358.6 Z" fill="#1a2029"/><circle cx="171.6" cy="349.6" r="1.6" fill="#1a2029"/>
<g stroke="#1a2029" stroke-width="1.3" fill="none"><rect x="161.8" y="385.6" width="8" height="10.8" fill="#8b959f"/><path d="M165.8 380.4 V385.6 M165.8 396.4 V401.4 M164.2 391 H167.4" stroke-width="1.2"/></g>
<g stroke="#1a2029" stroke-width="1.3" fill="none" stroke-width="1.2"><circle cx="166" cy="423.8" r="4.6"/><circle cx="162" cy="429.6" r="4.6"/><circle cx="170.2" cy="429.6" r="4.6"/></g>
<g fill="#0b0e13"><rect x="158" y="457.2" width="16" height="2.1"/><rect x="158" y="461.9" width="16" height="2.1"/><rect x="158" y="466.7" width="16" height="2.1"/></g>
</svg>
</body></html>
